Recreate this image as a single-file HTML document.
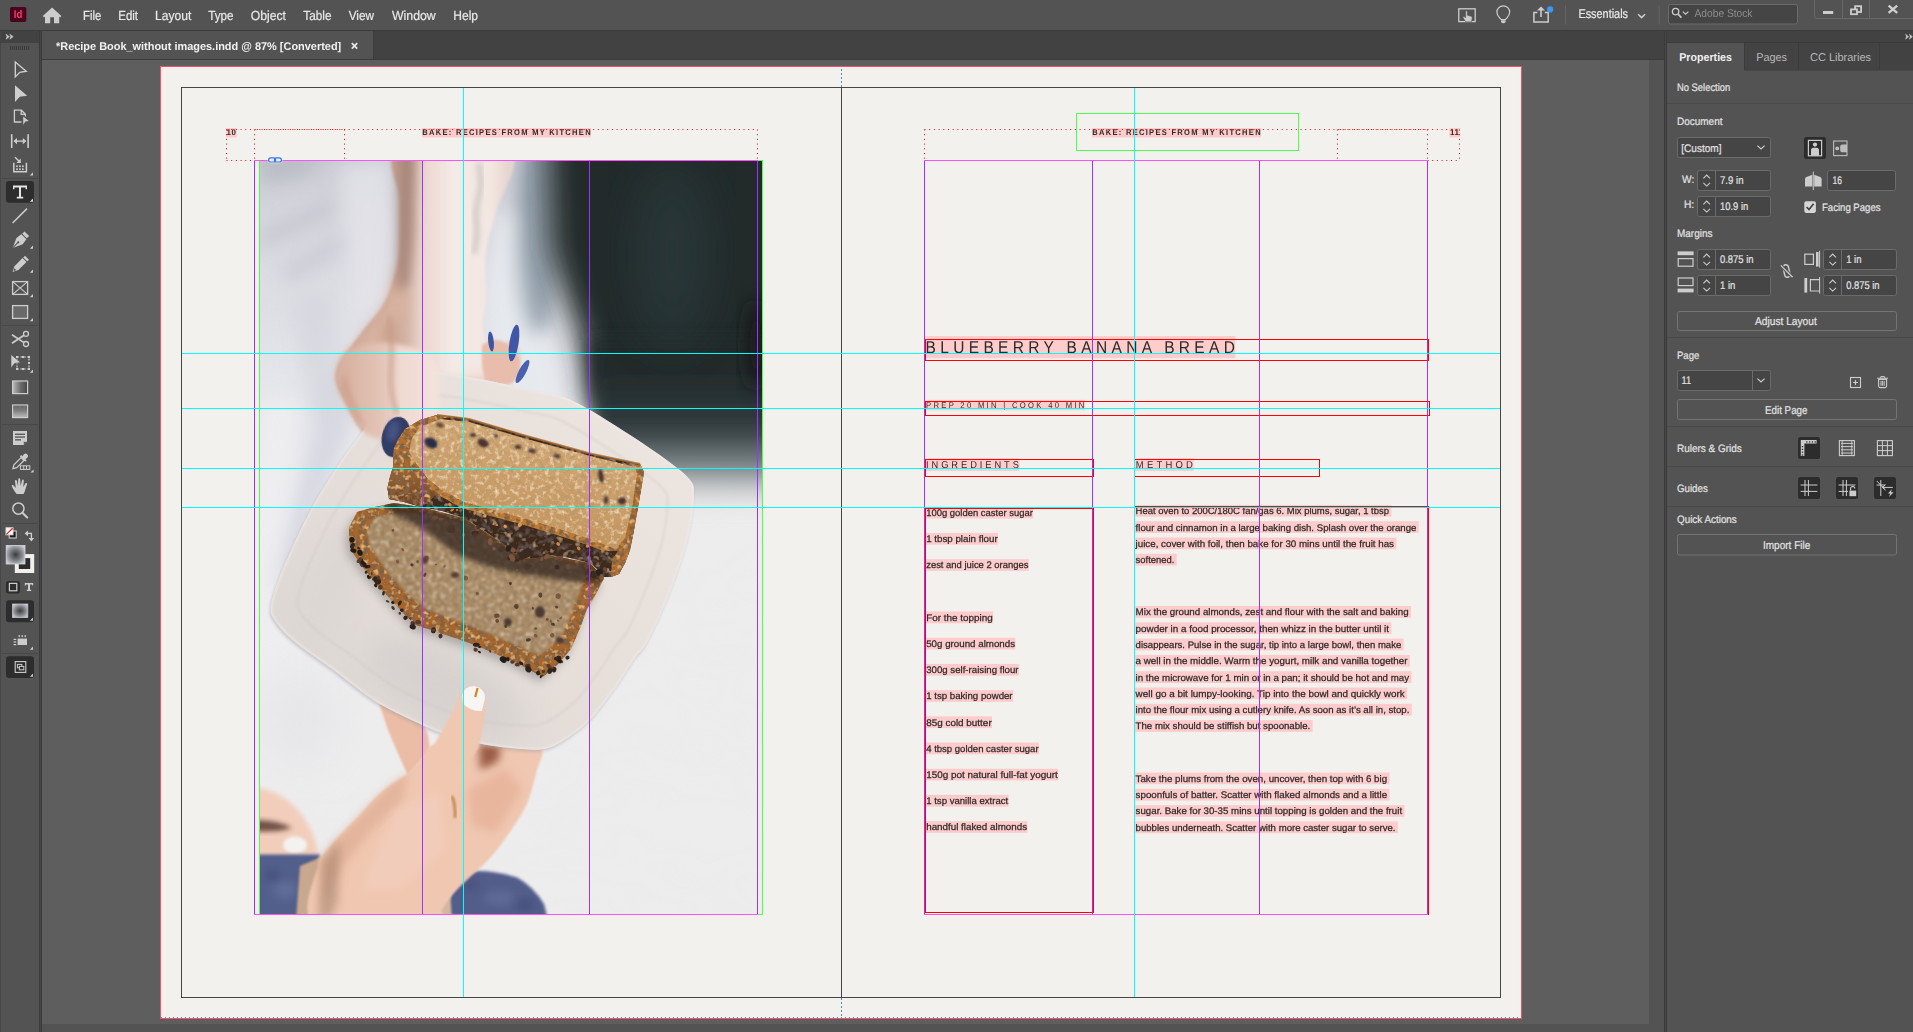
<!DOCTYPE html>
<html lang="en"><head><meta charset="utf-8"><title>Recipe Book_without images.indd @ 87% [Converted]</title>
<style>
html,body{margin:0;padding:0;background:#535353;overflow:hidden}
body{width:1913px;height:1032px;position:relative}
svg{position:absolute;left:0;top:0;display:block}
text{font-family:"Liberation Sans",sans-serif;white-space:pre}
</style></head><body>
<svg width="1913" height="1032" viewBox="0 0 1913 1032" shape-rendering="auto" text-rendering="geometricPrecision">
<rect x="0" y="0" width="1913" height="1032" fill="#535353"/>
<rect x="42" y="60" width="1623" height="972" fill="#5e5e5e"/>
<rect x="1649" y="60" width="16" height="972" fill="#535353"/>
<rect x="42" y="1024" width="1623" height="8" fill="#535353"/>
<rect x="160.5" y="66.5" width="1361" height="952" fill="#f3f1ee" stroke="#fa5068" stroke-width="1"/>
<line x1="161" y1="1017.5" x2="1521" y2="1017.5" stroke="#3d8bff" stroke-width="1" stroke-dasharray="1 3"/>
<rect x="181.5" y="87.5" width="1319" height="910" fill="none" stroke="#454545" stroke-width="1"/>
<line x1="841.5" y1="87.5" x2="841.5" y2="997.5" stroke="#454545" stroke-width="1"/>
<line x1="841.5" y1="69" x2="841.5" y2="87" stroke="#3d8bff" stroke-width="1" stroke-dasharray="2 2"/>
<line x1="841.5" y1="998" x2="841.5" y2="1018" stroke="#3d8bff" stroke-width="1" stroke-dasharray="2 2"/>
<defs>
<clipPath id="pclip"><rect x="259" y="161" width="503.5" height="753.5"/></clipPath>
<filter id="b0_6" x="-30%" y="-30%" width="160%" height="160%"><feGaussianBlur stdDeviation="0.6"/></filter>
<filter id="b1" x="-30%" y="-30%" width="160%" height="160%"><feGaussianBlur stdDeviation="1"/></filter>
<filter id="b1_5" x="-30%" y="-30%" width="160%" height="160%"><feGaussianBlur stdDeviation="1.5"/></filter>
<filter id="b2_5" x="-30%" y="-30%" width="160%" height="160%"><feGaussianBlur stdDeviation="2.5"/></filter>
<filter id="b4" x="-30%" y="-30%" width="160%" height="160%"><feGaussianBlur stdDeviation="4"/></filter>
<filter id="b6" x="-30%" y="-30%" width="160%" height="160%"><feGaussianBlur stdDeviation="6"/></filter>
<filter id="b9" x="-30%" y="-30%" width="160%" height="160%"><feGaussianBlur stdDeviation="9"/></filter>
<filter id="b14" x="-30%" y="-30%" width="160%" height="160%"><feGaussianBlur stdDeviation="14"/></filter>
<filter id="b20" x="-30%" y="-30%" width="160%" height="160%"><feGaussianBlur stdDeviation="20"/></filter>
<filter id="crumb" x="0" y="0" width="100%" height="100%"><feTurbulence type="fractalNoise" baseFrequency="0.2" numOctaves="3" seed="7" result="n"/><feColorMatrix in="n" type="matrix" values="0 0 0 0 0.5  0 0 0 0 0.32  0 0 0 0 0.14  3.2 0 0 0 -1.5" result="d"/><feComposite in="d" in2="SourceGraphic" operator="in" result="dd"/><feColorMatrix in="n" type="matrix" values="0 0 0 0 0.9  0 0 0 0 0.76  0 0 0 0 0.54  0 2.2 0 0 -1.12" result="l"/><feComposite in="l" in2="SourceGraphic" operator="in" result="ll"/><feMerge><feMergeNode in="SourceGraphic"/><feMergeNode in="dd"/><feMergeNode in="ll"/></feMerge></filter>
<filter id="crumb2" x="0" y="0" width="100%" height="100%"><feTurbulence type="fractalNoise" baseFrequency="0.22" numOctaves="3" seed="9" result="n"/><feColorMatrix in="n" type="matrix" values="0 0 0 0 0.3  0 0 0 0 0.2  0 0 0 0 0.11  3.6 0 0 0 -1.55" result="d"/><feComposite in="d" in2="SourceGraphic" operator="in" result="dd"/><feColorMatrix in="n" type="matrix" values="0 0 0 0 0.8  0 0 0 0 0.66  0 0 0 0 0.46  0 2.4 0 0 -1.25" result="l"/><feComposite in="l" in2="SourceGraphic" operator="in" result="ll"/><feMerge><feMergeNode in="SourceGraphic"/><feMergeNode in="dd"/><feMergeNode in="ll"/></feMerge></filter>
<filter id="nibs2" x="0" y="0" width="100%" height="100%"><feTurbulence type="fractalNoise" baseFrequency="0.16" numOctaves="2" seed="5" result="n"/><feColorMatrix in="n" type="matrix" values="0 0 0 0 0.1  0 0 0 0 0.07  0 0 0 0 0.06  4.0 0 0 0 -1.9" result="d"/><feComposite in="d" in2="SourceGraphic" operator="in" result="dd"/><feColorMatrix in="n" type="matrix" values="0 0 0 0 0.45  0 0 0 0 0.3  0 0 0 0 0.2  0 3.4 0 0 -1.95" result="l"/><feComposite in="l" in2="SourceGraphic" operator="in" result="ll"/><feMerge><feMergeNode in="SourceGraphic"/><feMergeNode in="dd"/><feMergeNode in="ll"/></feMerge></filter>
<filter id="nibs" x="0" y="0" width="100%" height="100%"><feTurbulence type="fractalNoise" baseFrequency="0.2" numOctaves="2" seed="3" result="n"/><feColorMatrix in="n" type="matrix" values="0 0 0 0 0.22  0 0 0 0 0.12  0 0 0 0 0.06  5.0 0 0 0 -2.1" result="d"/><feComposite in="d" in2="SourceGraphic" operator="in" result="dd"/><feColorMatrix in="n" type="matrix" values="0 0 0 0 0.74  0 0 0 0 0.46  0 0 0 0 0.19  0 3.6 0 0 -1.95" result="l"/><feComposite in="l" in2="SourceGraphic" operator="in" result="ll"/><feMerge><feMergeNode in="SourceGraphic"/><feMergeNode in="dd"/><feMergeNode in="ll"/></feMerge></filter>
<filter id="soft" x="0" y="0" width="100%" height="100%"><feTurbulence type="fractalNoise" baseFrequency="0.012 0.02" numOctaves="2" seed="11" result="n"/><feColorMatrix in="n" type="matrix" values="0 0 0 0 0.82  0 0 0 0 0.82  0 0 0 0 0.85  0.9 0 0 0 -0.32"/></filter>
<linearGradient id="plg" gradientUnits="userSpaceOnUse" x1="640" y1="430" x2="330" y2="700"><stop offset="0" stop-color="#ece4df"/><stop offset="0.45" stop-color="#e7dfda"/><stop offset="1" stop-color="#ded8d5"/></linearGradient>
<linearGradient id="clg" gradientUnits="userSpaceOnUse" x1="0" y1="161" x2="0" y2="640"><stop offset="0" stop-color="#c9cbd3"/><stop offset="0.12" stop-color="#d6d7de"/><stop offset="0.45" stop-color="#e4e5ea"/><stop offset="0.75" stop-color="#eeeef1"/><stop offset="1" stop-color="#eeeef0"/></linearGradient>
<linearGradient id="arm" gradientUnits="userSpaceOnUse" x1="398" y1="0" x2="508" y2="0"><stop offset="0" stop-color="#c7a396"/><stop offset="0.22" stop-color="#ecd6cd"/><stop offset="0.5" stop-color="#f4eae6"/><stop offset="0.85" stop-color="#f3e6e1"/><stop offset="1" stop-color="#e6d5cf"/></linearGradient>
<linearGradient id="drk" gradientUnits="userSpaceOnUse" x1="0" y1="370" x2="0" y2="512"><stop offset="0" stop-color="#222b2c"/><stop offset="0.42" stop-color="#2e393b" stop-opacity="0.98"/><stop offset="0.7" stop-color="#677376" stop-opacity="0.8"/><stop offset="1" stop-color="#d5d6d9" stop-opacity="0"/></linearGradient>
<linearGradient id="crg" gradientUnits="userSpaceOnUse" x1="520" y1="420" x2="500" y2="540"><stop offset="0" stop-color="#d3aa78"/><stop offset="1" stop-color="#c4935b"/></linearGradient>
<linearGradient id="crl" gradientUnits="userSpaceOnUse" x1="0" y1="420" x2="0" y2="505"><stop offset="0" stop-color="#b97832"/><stop offset="0.55" stop-color="#a8682b"/><stop offset="1" stop-color="#6d4221"/></linearGradient>
<linearGradient id="thg" gradientUnits="userSpaceOnUse" x1="338" y1="0" x2="438" y2="0"><stop offset="0" stop-color="#d6ae9c"/><stop offset="0.45" stop-color="#e4c5b8"/><stop offset="0.62" stop-color="#efd9d0"/><stop offset="1" stop-color="#f3e3dc"/></linearGradient>
</defs>
<g clip-path="url(#pclip)">
<rect x="259" y="161" width="504" height="754" fill="#eeedee"/>
<rect x="259" y="161" width="330" height="520" fill="url(#clg)"/>
<rect x="259" y="161" width="504" height="754" filter="url(#soft)" opacity="0.3"/>
<g filter="url(#b9)">
<path d="M259 232 L330 200 L336 214 L259 250 Z" fill="#bfc1cb" opacity="0.7"/>
<path d="M280 268 L345 232 L352 246 L290 284 Z" fill="#c3c5cf" opacity="0.65"/>
<path d="M259 150 L330 150 L300 178 L259 186 Z" fill="#b6b9c2" opacity="0.8"/>
<path d="M340 165 L392 160 L390 300 L352 330 Z" fill="#e3e3e9" opacity="0.85"/>
<path d="M290 300 L330 290 L345 400 L310 420 Z" fill="#d2d4dc" opacity="0.6"/>
<path d="M330 370 L352 420 L300 560 L272 590 Z" fill="#d3d5de" opacity="0.85"/>
<path d="M259 400 L300 400 L262 600 L259 600 Z" fill="#eeeef1" opacity="0.9"/>
<path d="M498 215 L520 218 L545 330 L575 440 L560 470 L500 400 L486 300 Z" fill="#e6e9ee"/>
<ellipse cx="538" cy="235" rx="22" ry="100" fill="#8393a0" opacity="0.75"/>
</g>
<g filter="url(#b14)">
<path d="M546 130 L550 250 L566 300 L580 340 L586 372 L588 405 L800 405 L800 130 Z" fill="#222b2c"/>
</g>
<g filter="url(#b9)"><path d="M588 340 L800 340 L800 520 L596 520 Z" fill="url(#drk)"/></g>
<ellipse cx="672" cy="255" rx="40" ry="90" fill="#2c3a3c" opacity="0.7" filter="url(#b20)"/>
<ellipse cx="756" cy="345" rx="12" ry="46" fill="#191515" opacity="0.7" filter="url(#b9)"/>
<ellipse cx="300" cy="720" rx="40" ry="50" fill="#e4e4e7" opacity="0.7" filter="url(#b20)"/>
<path d="M399.5 150.0 C417.8 141.7 492.9 139.7 509.0 150.0 C525.1 160.3 499.8 195.0 496.0 212.0 C492.2 229.0 487.7 237.3 486.0 252.0 C484.3 266.7 486.5 288.3 486.0 300.0 C485.5 311.7 483.0 315.3 483.0 322.0 C483.0 328.7 483.2 336.2 486.0 340.0 C488.8 343.8 495.7 345.0 500.0 345.0 C504.3 345.0 508.5 338.8 512.0 340.0 C515.5 341.2 520.0 346.7 521.0 352.0 C522.0 357.3 520.2 366.7 518.0 372.0 C515.8 377.3 516.0 380.7 508.0 384.0 C500.0 387.3 483.0 389.3 470.0 392.0 C457.0 394.7 441.7 395.3 430.0 400.0 C418.3 404.7 409.7 413.3 400.0 420.0 C390.3 426.7 378.8 439.0 372.0 440.0 C365.2 441.0 362.5 430.7 359.0 426.0 C355.5 421.3 354.5 418.7 351.0 412.0 C347.5 405.3 340.4 392.7 338.0 386.0 C335.6 379.3 335.7 376.7 336.5 372.0 C337.3 367.3 338.8 364.7 343.0 358.0 C347.2 351.3 355.3 340.8 362.0 332.0 C368.7 323.2 377.7 314.0 383.0 305.0 C388.3 296.0 391.3 286.8 394.0 278.0 C396.7 269.2 398.1 265.0 399.0 252.0 C399.9 239.0 399.4 217.0 399.5 200.0 C399.6 183.0 381.2 158.3 399.5 150.0 Z" fill="url(#arm)" filter="url(#b1_5)"/>
<g filter="url(#b6)">
<path d="M397 262 L408 300 L402 345 L384 392 L356 416 L340 386 L342 364 L362 334 L384 306 Z" fill="#dcb5a3" opacity="0.8"/>
<path d="M385 320 L395 324 L392 350 L385 346 Z" fill="#bd917c" opacity="0.7"/>
<path d="M399 150 L416 150 L413 240 L408 285 L396 292 L398 255 Z" fill="#9c7b6f" opacity="0.85"/>
<path d="M440 382 L500 374 L505 392 L440 400 Z" fill="#ecc9bb" opacity="0.9"/>
</g>
<path d="M479 163 L481 185 L476 210 L477 235 L474 254" fill="none" stroke="#cfc8c4" stroke-width="6" opacity="0.85" filter="url(#b2_5)"/>
<path d="M482 345 Q494 336 506 343 Q518 348 520 362 Q521 376 512 383 L488 388 Q480 370 482 345 Z" fill="#e9bdac" filter="url(#b1)"/>
<g filter="url(#b0_6)">
<ellipse cx="514" cy="343" rx="4.6" ry="18.5" transform="rotate(9 514 343)" fill="#4156a6"/>
<ellipse cx="491" cy="341.5" rx="2.8" ry="10" transform="rotate(-6 491 341.5)" fill="#4055a2"/>
<ellipse cx="522.5" cy="371.5" rx="3.6" ry="13" transform="rotate(28 522.5 371.5)" fill="#4a60ae"/>
</g>
<path d="M255 787 Q285 792 302 815 Q318 838 318 858 L255 860 Z" fill="#f2cdbb" filter="url(#b2_5)"/>
<path d="M255 820 Q278 820 292 828 Q276 833 255 831 Z" fill="#5b3a30" opacity="0.85" filter="url(#b2_5)"/>
<ellipse cx="295" cy="845" rx="12" ry="8.5" fill="#f3f2f0" filter="url(#b1_5)"/>
<path d="M255 854.5 L320 854.5 L318 920 L255 920 Z" fill="#535e8b" filter="url(#b1_5)"/>
<path d="M436 915 L448 899 L458 883 Q466 872 477 871 Q497 871 517 877.5 Q533 886 544 904 L548 920 Z" fill="#525d8a" filter="url(#b1_5)"/>
<ellipse cx="285" cy="890" rx="12" ry="9" fill="#6b77a2" opacity="0.6" filter="url(#b4)"/><ellipse cx="500" cy="898" rx="16" ry="8" fill="#6874a0" opacity="0.55" filter="url(#b4)"/>
<ellipse cx="272" cy="875" rx="8" ry="6" fill="#3f4975" opacity="0.6" filter="url(#b4)"/><ellipse cx="525" cy="905" rx="10" ry="6" fill="#3f4975" opacity="0.6" filter="url(#b4)"/><ellipse cx="470" cy="885" rx="9" ry="6" fill="#404a76" opacity="0.5" filter="url(#b4)"/>
<path d="M319 858 L300 866 L296 920 L340 920 L326 880 Z" fill="#c8a88f" filter="url(#b1)"/>
<path d="M420 899 L450 890 L452 920 L418 920 Z" fill="#d5b6a0" filter="url(#b1)"/>
<path d="M378 700 L420 716 L428 735 L430 750 L408 776 L396 749 L388 730 Z" fill="#ebbca6" filter="url(#b1)"/>
<path d="M431.0 746.0 C437.0 742.7 447.8 740.7 456.0 740.0 C464.2 739.3 471.0 741.3 480.0 742.0 C489.0 742.7 499.8 742.8 510.0 744.0 C520.2 745.2 536.5 744.7 541.0 749.0 C545.5 753.3 538.7 762.8 537.0 770.0 C535.3 777.2 533.0 785.7 531.0 792.0 C529.0 798.3 528.2 801.8 525.0 808.0 C521.8 814.2 516.8 821.8 512.0 829.0 C507.2 836.2 501.0 844.8 496.0 851.0 C491.0 857.2 486.5 861.5 482.0 866.0 C477.5 870.5 473.8 873.3 469.0 878.0 C464.2 882.7 457.5 888.7 453.0 894.0 C448.5 899.3 444.5 904.8 442.0 910.0 C439.5 915.2 459.0 922.5 438.0 925.0 C417.0 927.5 336.0 935.2 316.0 925.0 C296.0 914.8 317.0 875.5 318.0 864.0 C319.0 852.5 319.5 859.5 322.0 856.0 C324.5 852.5 329.0 847.5 333.0 843.0 C337.0 838.5 341.7 833.5 346.0 829.0 C350.3 824.5 354.5 820.8 359.0 816.0 C363.5 811.2 368.0 805.0 373.0 800.0 C378.0 795.0 383.2 790.5 389.0 786.0 C394.8 781.5 402.8 777.3 408.0 773.0 C413.2 768.7 416.2 764.5 420.0 760.0 C423.8 755.5 425.0 749.3 431.0 746.0 Z" fill="#f0c7b1" filter="url(#b1)"/>
<path d="M408 773 L389 786 L359 816 L333 843 L320 862 L322 905 L340 870 L372 830 L402 800 Z" fill="#dba88f" opacity="0.6" filter="url(#b4)"/>
<g filter="url(#b4)">
<path d="M479 744 L501 745 L498 762 L480 770 Z" fill="#8f4f36" opacity="0.9"/>
<path d="M468 790 L505 768 L522 790 L496 832 L472 826 Z" fill="#e6b097" opacity="0.75"/>
<path d="M395 810 L440 790 L446 850 L400 890 L360 890 Z" fill="#f6d8ca" opacity="0.35"/>
<path d="M322 862 L340 840 L338 900 L330 920 L318 920 Z" fill="#a37f69" opacity="0.55"/>
</g>
<path d="M452 796 Q456 806 455 818" fill="none" stroke="#b17c3c" stroke-width="2.6" opacity="0.85" filter="url(#b1)"/>
<path d="M402.0 383.0 C410.5 376.5 416.0 372.7 429.0 372.0 C442.0 371.3 463.2 376.0 480.0 379.0 C496.8 382.0 514.8 386.5 530.0 390.0 C545.2 393.5 554.3 392.5 571.0 400.0 C587.7 407.5 613.2 424.3 630.0 435.0 C646.8 445.7 662.0 456.5 672.0 464.0 C682.0 471.5 686.3 475.0 690.0 480.0 C693.7 485.0 694.2 485.0 694.0 494.0 C693.8 503.0 692.7 518.5 689.0 534.0 C685.3 549.5 678.8 569.2 672.0 587.0 C665.2 604.8 654.2 629.2 648.0 641.0 C641.8 652.8 640.3 650.3 635.0 658.0 C629.7 665.7 623.5 676.7 616.0 687.0 C608.5 697.3 598.8 711.0 590.0 720.0 C581.2 729.0 570.7 736.2 563.0 741.0 C555.3 745.8 550.8 747.7 544.0 749.0 C537.2 750.3 532.3 749.8 522.0 749.0 C511.7 748.2 495.3 746.7 482.0 744.0 C468.7 741.3 453.0 736.7 442.0 733.0 C431.0 729.3 427.2 727.3 416.0 722.0 C404.8 716.7 388.5 709.5 375.0 701.0 C361.5 692.5 348.3 680.8 335.0 671.0 C321.7 661.2 304.8 650.2 295.0 642.0 C285.2 633.8 280.0 628.0 276.0 622.0 C272.0 616.0 270.0 614.5 271.0 606.0 C272.0 597.5 275.8 586.2 282.0 571.0 C288.2 555.8 299.2 531.8 308.0 515.0 C316.8 498.2 326.0 483.8 335.0 470.0 C344.0 456.2 354.8 441.8 362.0 432.0 C369.2 422.2 371.3 419.2 378.0 411.0 C384.7 402.8 393.5 389.5 402.0 383.0 Z" fill="#9c9b9e" opacity="0.45" transform="translate(-1,2)" filter="url(#b1_5)"/>
<path d="M402.0 383.0 C410.5 376.5 416.0 372.7 429.0 372.0 C442.0 371.3 463.2 376.0 480.0 379.0 C496.8 382.0 514.8 386.5 530.0 390.0 C545.2 393.5 554.3 392.5 571.0 400.0 C587.7 407.5 613.2 424.3 630.0 435.0 C646.8 445.7 662.0 456.5 672.0 464.0 C682.0 471.5 686.3 475.0 690.0 480.0 C693.7 485.0 694.2 485.0 694.0 494.0 C693.8 503.0 692.7 518.5 689.0 534.0 C685.3 549.5 678.8 569.2 672.0 587.0 C665.2 604.8 654.2 629.2 648.0 641.0 C641.8 652.8 640.3 650.3 635.0 658.0 C629.7 665.7 623.5 676.7 616.0 687.0 C608.5 697.3 598.8 711.0 590.0 720.0 C581.2 729.0 570.7 736.2 563.0 741.0 C555.3 745.8 550.8 747.7 544.0 749.0 C537.2 750.3 532.3 749.8 522.0 749.0 C511.7 748.2 495.3 746.7 482.0 744.0 C468.7 741.3 453.0 736.7 442.0 733.0 C431.0 729.3 427.2 727.3 416.0 722.0 C404.8 716.7 388.5 709.5 375.0 701.0 C361.5 692.5 348.3 680.8 335.0 671.0 C321.7 661.2 304.8 650.2 295.0 642.0 C285.2 633.8 280.0 628.0 276.0 622.0 C272.0 616.0 270.0 614.5 271.0 606.0 C272.0 597.5 275.8 586.2 282.0 571.0 C288.2 555.8 299.2 531.8 308.0 515.0 C316.8 498.2 326.0 483.8 335.0 470.0 C344.0 456.2 354.8 441.8 362.0 432.0 C369.2 422.2 371.3 419.2 378.0 411.0 C384.7 402.8 393.5 389.5 402.0 383.0 Z" fill="url(#plg)" filter="url(#b0_6)"/>
<clipPath id="plc"><path d="M402.0 383.0 C410.5 376.5 416.0 372.7 429.0 372.0 C442.0 371.3 463.2 376.0 480.0 379.0 C496.8 382.0 514.8 386.5 530.0 390.0 C545.2 393.5 554.3 392.5 571.0 400.0 C587.7 407.5 613.2 424.3 630.0 435.0 C646.8 445.7 662.0 456.5 672.0 464.0 C682.0 471.5 686.3 475.0 690.0 480.0 C693.7 485.0 694.2 485.0 694.0 494.0 C693.8 503.0 692.7 518.5 689.0 534.0 C685.3 549.5 678.8 569.2 672.0 587.0 C665.2 604.8 654.2 629.2 648.0 641.0 C641.8 652.8 640.3 650.3 635.0 658.0 C629.7 665.7 623.5 676.7 616.0 687.0 C608.5 697.3 598.8 711.0 590.0 720.0 C581.2 729.0 570.7 736.2 563.0 741.0 C555.3 745.8 550.8 747.7 544.0 749.0 C537.2 750.3 532.3 749.8 522.0 749.0 C511.7 748.2 495.3 746.7 482.0 744.0 C468.7 741.3 453.0 736.7 442.0 733.0 C431.0 729.3 427.2 727.3 416.0 722.0 C404.8 716.7 388.5 709.5 375.0 701.0 C361.5 692.5 348.3 680.8 335.0 671.0 C321.7 661.2 304.8 650.2 295.0 642.0 C285.2 633.8 280.0 628.0 276.0 622.0 C272.0 616.0 270.0 614.5 271.0 606.0 C272.0 597.5 275.8 586.2 282.0 571.0 C288.2 555.8 299.2 531.8 308.0 515.0 C316.8 498.2 326.0 483.8 335.0 470.0 C344.0 456.2 354.8 441.8 362.0 432.0 C369.2 422.2 371.3 419.2 378.0 411.0 C384.7 402.8 393.5 389.5 402.0 383.0 Z"/></clipPath>
<g clip-path="url(#plc)">
<ellipse cx="445" cy="688" rx="85" ry="36" transform="rotate(28 445 688)" fill="#d5d0ce" opacity="0.85" filter="url(#b14)"/>
<ellipse cx="330" cy="585" rx="28" ry="70" transform="rotate(25 330 585)" fill="#dcd6d3" opacity="0.7" filter="url(#b9)"/>
<path d="M402.0 383.0 C410.5 376.5 416.0 372.7 429.0 372.0 C442.0 371.3 463.2 376.0 480.0 379.0 C496.8 382.0 514.8 386.5 530.0 390.0 C545.2 393.5 554.3 392.5 571.0 400.0 C587.7 407.5 613.2 424.3 630.0 435.0 C646.8 445.7 662.0 456.5 672.0 464.0 C682.0 471.5 686.3 475.0 690.0 480.0 C693.7 485.0 694.2 485.0 694.0 494.0 C693.8 503.0 692.7 518.5 689.0 534.0 C685.3 549.5 678.8 569.2 672.0 587.0 C665.2 604.8 654.2 629.2 648.0 641.0 C641.8 652.8 640.3 650.3 635.0 658.0 C629.7 665.7 623.5 676.7 616.0 687.0 C608.5 697.3 598.8 711.0 590.0 720.0 C581.2 729.0 570.7 736.2 563.0 741.0 C555.3 745.8 550.8 747.7 544.0 749.0 C537.2 750.3 532.3 749.8 522.0 749.0 C511.7 748.2 495.3 746.7 482.0 744.0 C468.7 741.3 453.0 736.7 442.0 733.0 C431.0 729.3 427.2 727.3 416.0 722.0 C404.8 716.7 388.5 709.5 375.0 701.0 C361.5 692.5 348.3 680.8 335.0 671.0 C321.7 661.2 304.8 650.2 295.0 642.0 C285.2 633.8 280.0 628.0 276.0 622.0 C272.0 616.0 270.0 614.5 271.0 606.0 C272.0 597.5 275.8 586.2 282.0 571.0 C288.2 555.8 299.2 531.8 308.0 515.0 C316.8 498.2 326.0 483.8 335.0 470.0 C344.0 456.2 354.8 441.8 362.0 432.0 C369.2 422.2 371.3 419.2 378.0 411.0 C384.7 402.8 393.5 389.5 402.0 383.0 Z" fill="none" stroke="#f0ecea" stroke-width="3.5" opacity="0.6" filter="url(#b1)"/>
<path d="M402.0 383.0 C410.5 376.5 416.0 372.7 429.0 372.0 C442.0 371.3 463.2 376.0 480.0 379.0 C496.8 382.0 514.8 386.5 530.0 390.0 C545.2 393.5 554.3 392.5 571.0 400.0 C587.7 407.5 613.2 424.3 630.0 435.0 C646.8 445.7 662.0 456.5 672.0 464.0 C682.0 471.5 686.3 475.0 690.0 480.0 C693.7 485.0 694.2 485.0 694.0 494.0 C693.8 503.0 692.7 518.5 689.0 534.0 C685.3 549.5 678.8 569.2 672.0 587.0 C665.2 604.8 654.2 629.2 648.0 641.0 C641.8 652.8 640.3 650.3 635.0 658.0 C629.7 665.7 623.5 676.7 616.0 687.0 C608.5 697.3 598.8 711.0 590.0 720.0 C581.2 729.0 570.7 736.2 563.0 741.0 C555.3 745.8 550.8 747.7 544.0 749.0 C537.2 750.3 532.3 749.8 522.0 749.0 C511.7 748.2 495.3 746.7 482.0 744.0 C468.7 741.3 453.0 736.7 442.0 733.0 C431.0 729.3 427.2 727.3 416.0 722.0 C404.8 716.7 388.5 709.5 375.0 701.0 C361.5 692.5 348.3 680.8 335.0 671.0 C321.7 661.2 304.8 650.2 295.0 642.0 C285.2 633.8 280.0 628.0 276.0 622.0 C272.0 616.0 270.0 614.5 271.0 606.0 C272.0 597.5 275.8 586.2 282.0 571.0 C288.2 555.8 299.2 531.8 308.0 515.0 C316.8 498.2 326.0 483.8 335.0 470.0 C344.0 456.2 354.8 441.8 362.0 432.0 C369.2 422.2 371.3 419.2 378.0 411.0 C384.7 402.8 393.5 389.5 402.0 383.0 Z" fill="none" stroke="#cdc6c2" stroke-width="1.6" opacity="0.5" transform="translate(482 560) scale(0.875) translate(-482 -560)" filter="url(#b1)"/>
<path d="M357.0 512.0 L375.0 507.0 L394.0 503.0 L421.0 507.0 L464.0 518.0 L496.0 539.0 L523.0 558.0 L549.0 555.0 L590.0 563.0 L604.0 578.0 L596.0 594.0 L587.0 609.0 L580.0 628.0 L571.0 649.0 L558.0 664.0 L544.0 676.0 L541.0 676.0 L528.0 669.0 L515.0 662.0 L496.0 654.0 L480.0 647.0 L464.0 641.0 L440.0 633.0 L416.0 625.0 L404.0 614.0 L394.0 603.0 L384.0 592.0 L375.0 582.0 L362.0 566.0 L351.0 550.0 L349.0 539.0 L349.0 528.0 Z" fill="#7d7a78" opacity="0.5" transform="translate(-3,5)" filter="url(#b4)"/>
</g>
<path d="M336.5 372.0 C337.8 366.3 338.8 356.8 346.0 352.0 C353.2 347.2 367.7 343.3 380.0 343.0 C392.3 342.7 410.5 346.3 420.0 350.0 C429.5 353.7 433.8 358.3 437.0 365.0 C440.2 371.7 439.0 381.8 439.0 390.0 C439.0 398.2 440.0 408.8 437.0 414.0 C434.0 419.2 425.2 416.7 421.0 421.0 C416.8 425.3 414.8 434.2 412.0 440.0 C409.2 445.8 407.3 453.0 404.0 456.0 C400.7 459.0 395.8 460.7 392.0 458.0 C388.2 455.3 384.7 443.7 381.0 440.0 C377.3 436.3 373.7 438.2 370.0 436.0 C366.3 433.8 362.2 431.0 359.0 427.0 C355.8 423.0 354.5 418.8 351.0 412.0 C347.5 405.2 340.4 392.7 338.0 386.0 C335.6 379.3 335.2 377.7 336.5 372.0 Z" fill="url(#thg)" filter="url(#b2_5)"/>
<path d="M345 372 Q352 400 366 428 Q352 418 340 388 Z" fill="#cda08b" opacity="0.75" filter="url(#b2_5)"/>
<path d="M389 316 Q393 345 391 368 Q389 392 397 414" fill="none" stroke="#c59c89" stroke-width="4" opacity="0.8" filter="url(#b2_5)"/>
<ellipse cx="396" cy="437" rx="14" ry="20.5" transform="rotate(14 396 437)" fill="#313c66" filter="url(#b0_6)"/>
<ellipse cx="393" cy="431" rx="6" ry="11" transform="rotate(14 393 431)" fill="#4b588a" opacity="0.8" filter="url(#b2_5)"/>
<path d="M461 694 Q463 686 474 686 Q485 688 485 697 L485 712 L482.5 730 L478.5 748 L470 760 L440 762 L431.7 749 L442.4 730 L453 711.6 Z" fill="#f0c7b1" filter="url(#b1)"/>
<path d="M462 696 Q464 686 474 686 Q485 688 485 698 L482 711 Q472 712 463 704 Z" fill="#f7f6f4" filter="url(#b0_6)"/>
<path d="M477.6 688 L475.2 697" stroke="#dc851f" stroke-width="2.2" filter="url(#b0_6)"/>
<path d="M357.0 512.0 L375.0 507.0 L394.0 503.0 L421.0 507.0 L464.0 518.0 L496.0 539.0 L523.0 558.0 L549.0 555.0 L590.0 563.0 L604.0 578.0 L596.0 594.0 L587.0 609.0 L580.0 628.0 L571.0 649.0 L558.0 664.0 L544.0 676.0 L541.0 676.0 L528.0 669.0 L515.0 662.0 L496.0 654.0 L480.0 647.0 L464.0 641.0 L440.0 633.0 L416.0 625.0 L404.0 614.0 L394.0 603.0 L384.0 592.0 L375.0 582.0 L362.0 566.0 L351.0 550.0 L349.0 539.0 L349.0 528.0 Z" fill="#a86629" filter="url(#nibs)"/>
<g filter="url(#b1)"><path d="M366.0 516.0 L394.0 510.0 L421.0 513.0 L464.0 524.0 L496.0 545.0 L523.0 564.0 L549.0 561.0 L586.0 568.0 L590.0 580.0 L580.0 608.0 L566.0 643.0 L550.0 660.0 L541.0 666.0 L515.0 654.0 L464.0 632.0 L422.0 616.0 L402.0 600.0 L382.0 578.0 L362.0 550.0 L358.0 532.0 Z" fill="#aa8b66" filter="url(#crumb2)" transform="translate(478 580) scale(0.94 0.92) translate(-476 -584)"/></g>
<clipPath id="botc"><path d="M357.0 512.0 L375.0 507.0 L394.0 503.0 L421.0 507.0 L464.0 518.0 L496.0 539.0 L523.0 558.0 L549.0 555.0 L590.0 563.0 L604.0 578.0 L596.0 594.0 L587.0 609.0 L580.0 628.0 L571.0 649.0 L558.0 664.0 L544.0 676.0 L541.0 676.0 L528.0 669.0 L515.0 662.0 L496.0 654.0 L480.0 647.0 L464.0 641.0 L440.0 633.0 L416.0 625.0 L404.0 614.0 L394.0 603.0 L384.0 592.0 L375.0 582.0 L362.0 566.0 L351.0 550.0 L349.0 539.0 L349.0 528.0 Z"/></clipPath>
<g clip-path="url(#botc)"><path d="M380 500 L421 507 L464 518 L496 539 L523 558 L549 555 L590 563 L604 577 L600 584 L560 580 L520 574 L485 566 L455 553 L425 530 L395 515 Z" fill="#2e211a" opacity="0.72" filter="url(#b2_5)"/></g>
<path d="M437.0 415.0 L452.0 416.5 L469.0 419.0 L497.0 427.0 L523.0 435.0 L556.0 444.0 L590.0 453.5 L616.0 459.0 L640.0 464.0 L644.0 472.0 L641.0 490.0 L638.0 507.0 L634.0 530.0 L630.0 550.0 L625.0 563.0 L619.0 574.0 L611.0 577.0 L603.0 577.0 L597.0 569.0 L590.0 563.0 L570.0 558.0 L549.0 555.0 L536.0 558.0 L523.0 558.0 L509.0 548.0 L496.0 539.0 L480.0 528.0 L464.0 518.0 L442.0 511.0 L421.0 507.0 L404.0 502.0 L389.0 499.0 L387.5 488.0 L390.0 477.0 L393.0 467.0 L393.0 457.0 L394.0 448.0 L399.0 438.0 L405.0 429.0 L420.0 420.0 Z" fill="#3d2a1f" filter="url(#nibs2)"/>
<path d="M437 415 L452 416.5 L440 419 L426 424 L424 450 L427 478 L440 492 L421 507 L404 502 L389 499 L387.5 488 L390 477 L393 467 L393 457 L394 448 L399 438 L405 429 L420 420 Z" fill="url(#crl)" filter="url(#nibs)"/>
<path d="M640 464 L644 472 L641 490 L638 507 L634 530 L630 550 L625 563 L619 574 L611 577 L612 560 L620 548 L628 520 L634 480 L634 466 Z" fill="#b0702d" filter="url(#nibs)"/>
<path d="M427 479 L444 493 L464 504 L493 512 L523 520 L556 530 L590 541 L616 551 L625 546" fill="none" stroke="#bf7a30" stroke-width="9" stroke-linejoin="round" filter="url(#nibs)"/>
<g filter="url(#b0_6)"><path d="M440.0 419.0 L469.0 422.0 L523.0 438.0 L590.0 456.0 L635.0 467.0 L637.0 474.0 L632.0 508.0 L625.0 538.0 L616.0 549.0 L590.0 539.0 L556.0 528.0 L523.0 518.0 L493.0 510.0 L464.0 502.0 L444.0 491.0 L429.0 480.0 L418.0 466.0 L409.0 452.0 L412.0 438.0 L420.0 427.0 Z" fill="url(#crg)" filter="url(#crumb)"/></g>
<path d="M437 415 L469 419 L523 435 L590 453.5 L640 464" fill="none" stroke="#a9692b" stroke-width="2" opacity="0.8" filter="url(#b0_6)"/>
<g filter="url(#b0_6)">
<ellipse cx="599.2" cy="572.4" rx="3.6" ry="3.5" fill="#2c201b" transform="rotate(7 599.2 572.4)"/>
<ellipse cx="494.0" cy="548.7" rx="1.9" ry="1.8" fill="#7a563e" transform="rotate(97 494.0 548.7)"/>
<ellipse cx="568.2" cy="566.5" rx="2.6" ry="2.5" fill="#6b4a38" transform="rotate(99 568.2 566.5)"/>
<ellipse cx="430.5" cy="516.2" rx="1.9" ry="1.9" fill="#5c3f30" transform="rotate(1 430.5 516.2)"/>
<ellipse cx="478.1" cy="527.1" rx="2.0" ry="2.0" fill="#4a342a" transform="rotate(138 478.1 527.1)"/>
<ellipse cx="601.6" cy="577.4" rx="3.3" ry="2.2" fill="#7a563e" transform="rotate(92 601.6 577.4)"/>
<ellipse cx="475.0" cy="533.1" rx="3.6" ry="2.0" fill="#3a2a22" transform="rotate(173 475.0 533.1)"/>
<ellipse cx="452.1" cy="527.8" rx="2.8" ry="1.7" fill="#4a342a" transform="rotate(120 452.1 527.8)"/>
<ellipse cx="451.2" cy="529.4" rx="3.9" ry="3.6" fill="#4a342a" transform="rotate(4 451.2 529.4)"/>
<ellipse cx="536.0" cy="561.1" rx="1.6" ry="1.4" fill="#5c3f30" transform="rotate(159 536.0 561.1)"/>
<ellipse cx="490.2" cy="541.6" rx="3.6" ry="2.5" fill="#7a563e" transform="rotate(90 490.2 541.6)"/>
<ellipse cx="524.1" cy="553.0" rx="3.4" ry="3.2" fill="#4a342a" transform="rotate(9 524.1 553.0)"/>
<ellipse cx="441.1" cy="519.1" rx="2.5" ry="1.7" fill="#6b4a38" transform="rotate(179 441.1 519.1)"/>
<ellipse cx="513.8" cy="550.9" rx="3.5" ry="2.2" fill="#2c201b" transform="rotate(176 513.8 550.9)"/>
<ellipse cx="526.6" cy="553.7" rx="4.0" ry="3.8" fill="#3a2a22" transform="rotate(8 526.6 553.7)"/>
<ellipse cx="557.3" cy="557.9" rx="3.2" ry="1.8" fill="#6b4a38" transform="rotate(163 557.3 557.9)"/>
<ellipse cx="521.6" cy="555.9" rx="4.0" ry="3.9" fill="#3a2a22" transform="rotate(161 521.6 555.9)"/>
<ellipse cx="541.7" cy="559.1" rx="2.0" ry="1.3" fill="#7a563e" transform="rotate(116 541.7 559.1)"/>
<ellipse cx="591.8" cy="572.2" rx="2.7" ry="2.3" fill="#7a563e" transform="rotate(81 591.8 572.2)"/>
<ellipse cx="509.0" cy="558.3" rx="1.9" ry="1.8" fill="#3a2a22" transform="rotate(160 509.0 558.3)"/>
<ellipse cx="516.9" cy="559.0" rx="2.8" ry="2.7" fill="#3a2a22" transform="rotate(92 516.9 559.0)"/>
<ellipse cx="501.4" cy="549.2" rx="3.4" ry="2.7" fill="#4a342a" transform="rotate(171 501.4 549.2)"/>
<ellipse cx="527.3" cy="566.7" rx="3.3" ry="2.8" fill="#4a342a" transform="rotate(148 527.3 566.7)"/>
<ellipse cx="546.7" cy="556.5" rx="3.2" ry="2.2" fill="#7a563e" transform="rotate(128 546.7 556.5)"/>
<ellipse cx="511.7" cy="557.1" rx="3.4" ry="2.4" fill="#7a563e" transform="rotate(44 511.7 557.1)"/>
<ellipse cx="605.0" cy="569.3" rx="2.4" ry="1.9" fill="#6b4a38" transform="rotate(42 605.0 569.3)"/>
<ellipse cx="508.3" cy="548.5" rx="3.3" ry="2.8" fill="#2c201b" transform="rotate(106 508.3 548.5)"/>
<ellipse cx="557.1" cy="567.1" rx="2.3" ry="2.1" fill="#3a2a22" transform="rotate(163 557.1 567.1)"/>
<ellipse cx="435.2" cy="517.5" rx="3.1" ry="2.0" fill="#6b4a38" transform="rotate(175 435.2 517.5)"/>
<ellipse cx="586.8" cy="566.7" rx="2.1" ry="2.0" fill="#5c3f30" transform="rotate(28 586.8 566.7)"/>
<ellipse cx="474.9" cy="534.4" rx="2.6" ry="1.9" fill="#4a342a" transform="rotate(156 474.9 534.4)"/>
<ellipse cx="463.6" cy="534.9" rx="1.6" ry="1.6" fill="#7a563e" transform="rotate(104 463.6 534.9)"/>
<ellipse cx="610.2" cy="569.4" rx="1.7" ry="1.2" fill="#3a2a22" transform="rotate(75 610.2 569.4)"/>
<ellipse cx="517.5" cy="550.7" rx="2.4" ry="1.8" fill="#6b4a38" transform="rotate(144 517.5 550.7)"/>
<ellipse cx="513.2" cy="550.2" rx="2.5" ry="2.5" fill="#7a563e" transform="rotate(34 513.2 550.2)"/>
<ellipse cx="517.3" cy="556.8" rx="2.5" ry="2.0" fill="#4a342a" transform="rotate(157 517.3 556.8)"/>
<ellipse cx="512.8" cy="559.0" rx="2.5" ry="2.5" fill="#7a563e" transform="rotate(126 512.8 559.0)"/>
<ellipse cx="593.6" cy="574.2" rx="3.8" ry="3.1" fill="#3a2a22" transform="rotate(77 593.6 574.2)"/>
<ellipse cx="529.7" cy="566.2" rx="2.3" ry="1.4" fill="#4a342a" transform="rotate(6 529.7 566.2)"/>
<ellipse cx="561.3" cy="557.2" rx="1.7" ry="1.6" fill="#6b4a38" transform="rotate(3 561.3 557.2)"/>
<ellipse cx="558.2" cy="544.0" rx="2.1" ry="1.6" fill="#d08c40" transform="rotate(39 558.2 544.0)"/>
<ellipse cx="505.2" cy="526.4" rx="1.8" ry="1.7" fill="#dc9c50" transform="rotate(30 505.2 526.4)"/>
<ellipse cx="429.0" cy="500.5" rx="1.6" ry="1.4" fill="#c98236" transform="rotate(6 429.0 500.5)"/>
<ellipse cx="493.4" cy="523.9" rx="1.4" ry="0.9" fill="#d08c40" transform="rotate(116 493.4 523.9)"/>
<ellipse cx="457.1" cy="510.0" rx="1.2" ry="1.0" fill="#c98236" transform="rotate(176 457.1 510.0)"/>
<ellipse cx="578.7" cy="548.4" rx="2.2" ry="1.6" fill="#c98236" transform="rotate(50 578.7 548.4)"/>
<ellipse cx="519.8" cy="524.9" rx="2.2" ry="2.0" fill="#dc9c50" transform="rotate(149 519.8 524.9)"/>
<ellipse cx="484.9" cy="515.7" rx="1.8" ry="1.7" fill="#dc9c50" transform="rotate(84 484.9 515.7)"/>
<ellipse cx="496.9" cy="525.1" rx="1.3" ry="0.9" fill="#d08c40" transform="rotate(21 496.9 525.1)"/>
<ellipse cx="587.5" cy="546.1" rx="1.7" ry="1.7" fill="#d08c40" transform="rotate(179 587.5 546.1)"/>
<ellipse cx="449.8" cy="504.6" rx="2.0" ry="1.7" fill="#d08c40" transform="rotate(34 449.8 504.6)"/>
<ellipse cx="602.9" cy="549.1" rx="1.9" ry="1.8" fill="#c98236" transform="rotate(17 602.9 549.1)"/>
<ellipse cx="452.2" cy="510.0" rx="2.1" ry="1.2" fill="#c98236" transform="rotate(147 452.2 510.0)"/>
<ellipse cx="474.9" cy="513.0" rx="1.7" ry="1.5" fill="#c98236" transform="rotate(125 474.9 513.0)"/>
<ellipse cx="527.9" cy="666.0" rx="2.8" ry="2.2" fill="#4a3226" transform="rotate(173 527.9 666.0)"/>
<ellipse cx="490.1" cy="651.3" rx="1.4" ry="1.0" fill="#4a3226" transform="rotate(72 490.1 651.3)"/>
<ellipse cx="374.2" cy="579.7" rx="2.3" ry="1.4" fill="#5a3a26" transform="rotate(4 374.2 579.7)"/>
<ellipse cx="360.0" cy="552.7" rx="3.1" ry="2.5" fill="#241a17" transform="rotate(61 360.0 552.7)"/>
<ellipse cx="433.4" cy="630.3" rx="3.0" ry="2.4" fill="#33251f" transform="rotate(98 433.4 630.3)"/>
<ellipse cx="367.7" cy="566.7" rx="3.0" ry="1.7" fill="#33251f" transform="rotate(170 367.7 566.7)"/>
<ellipse cx="369.6" cy="577.6" rx="2.0" ry="1.4" fill="#4a3226" transform="rotate(157 369.6 577.6)"/>
<ellipse cx="558.5" cy="658.6" rx="3.0" ry="2.8" fill="#2d211e" transform="rotate(110 558.5 658.6)"/>
<ellipse cx="412.8" cy="623.2" rx="2.5" ry="1.8" fill="#4a3226" transform="rotate(24 412.8 623.2)"/>
<ellipse cx="362.7" cy="563.9" rx="3.2" ry="2.7" fill="#5a3a26" transform="rotate(89 362.7 563.9)"/>
<ellipse cx="412.7" cy="626.8" rx="3.2" ry="2.5" fill="#2d211e" transform="rotate(25 412.7 626.8)"/>
<ellipse cx="518.2" cy="664.5" rx="2.1" ry="1.3" fill="#5a3a26" transform="rotate(65 518.2 664.5)"/>
<ellipse cx="543.4" cy="671.4" rx="1.8" ry="1.7" fill="#5a3a26" transform="rotate(88 543.4 671.4)"/>
<ellipse cx="410.3" cy="618.5" rx="1.3" ry="1.0" fill="#5a3a26" transform="rotate(39 410.3 618.5)"/>
<ellipse cx="517.2" cy="664.1" rx="1.8" ry="1.0" fill="#4a3226" transform="rotate(6 517.2 664.1)"/>
<ellipse cx="528.4" cy="669.3" rx="3.3" ry="2.9" fill="#2d211e" transform="rotate(47 528.4 669.3)"/>
<ellipse cx="393.1" cy="608.0" rx="2.3" ry="1.4" fill="#4a3226" transform="rotate(53 393.1 608.0)"/>
<ellipse cx="542.0" cy="675.7" rx="1.9" ry="1.1" fill="#5a3a26" transform="rotate(174 542.0 675.7)"/>
<ellipse cx="353.3" cy="550.5" rx="3.1" ry="2.2" fill="#241a17" transform="rotate(24 353.3 550.5)"/>
<ellipse cx="378.0" cy="581.7" rx="3.3" ry="2.8" fill="#33251f" transform="rotate(164 378.0 581.7)"/>
<ellipse cx="418.3" cy="622.1" rx="3.1" ry="2.1" fill="#5a3a26" transform="rotate(13 418.3 622.1)"/>
<ellipse cx="375.9" cy="585.3" rx="2.1" ry="1.4" fill="#241a17" transform="rotate(80 375.9 585.3)"/>
<ellipse cx="361.5" cy="562.4" rx="2.6" ry="2.1" fill="#4a3226" transform="rotate(112 361.5 562.4)"/>
<ellipse cx="440.5" cy="636.0" rx="2.4" ry="2.1" fill="#4a3226" transform="rotate(78 440.5 636.0)"/>
<ellipse cx="562.0" cy="661.6" rx="1.6" ry="0.9" fill="#5a3a26" transform="rotate(67 562.0 661.6)"/>
<ellipse cx="405.5" cy="617.7" rx="2.3" ry="2.1" fill="#33251f" transform="rotate(147 405.5 617.7)"/>
<ellipse cx="399.8" cy="613.3" rx="1.4" ry="1.3" fill="#4a3226" transform="rotate(95 399.8 613.3)"/>
<ellipse cx="362.0" cy="561.4" rx="2.9" ry="1.6" fill="#241a17" transform="rotate(73 362.0 561.4)"/>
<ellipse cx="555.7" cy="658.9" rx="1.6" ry="1.4" fill="#33251f" transform="rotate(179 555.7 658.9)"/>
<ellipse cx="358.6" cy="548.1" rx="1.6" ry="1.1" fill="#33251f" transform="rotate(35 358.6 548.1)"/>
<ellipse cx="521.2" cy="663.2" rx="2.4" ry="1.4" fill="#241a17" transform="rotate(31 521.2 663.2)"/>
<ellipse cx="366.9" cy="566.7" rx="1.8" ry="1.0" fill="#241a17" transform="rotate(135 366.9 566.7)"/>
<ellipse cx="392.7" cy="602.5" rx="1.6" ry="1.5" fill="#241a17" transform="rotate(24 392.7 602.5)"/>
<ellipse cx="475.6" cy="649.7" rx="2.2" ry="2.0" fill="#5a3a26" transform="rotate(30 475.6 649.7)"/>
<ellipse cx="433.3" cy="630.1" rx="2.2" ry="1.3" fill="#5a3a26" transform="rotate(171 433.3 630.1)"/>
<ellipse cx="511.6" cy="661.7" rx="1.3" ry="1.2" fill="#4a3226" transform="rotate(107 511.6 661.7)"/>
<ellipse cx="378.0" cy="578.1" rx="2.5" ry="2.2" fill="#5a3a26" transform="rotate(90 378.0 578.1)"/>
<ellipse cx="368.4" cy="576.7" rx="1.9" ry="1.4" fill="#241a17" transform="rotate(61 368.4 576.7)"/>
<ellipse cx="549.8" cy="670.8" rx="3.1" ry="2.5" fill="#33251f" transform="rotate(102 549.8 670.8)"/>
<ellipse cx="371.7" cy="573.6" rx="1.4" ry="1.0" fill="#4a3226" transform="rotate(72 371.7 573.6)"/>
<ellipse cx="380.3" cy="587.4" rx="2.3" ry="2.2" fill="#5a3a26" transform="rotate(159 380.3 587.4)"/>
<ellipse cx="364.7" cy="564.9" rx="2.4" ry="2.0" fill="#241a17" transform="rotate(99 364.7 564.9)"/>
<ellipse cx="512.6" cy="662.1" rx="2.1" ry="1.7" fill="#5a3a26" transform="rotate(176 512.6 662.1)"/>
<ellipse cx="554.2" cy="669.7" rx="2.8" ry="2.2" fill="#33251f" transform="rotate(106 554.2 669.7)"/>
<ellipse cx="479.4" cy="652.0" rx="1.7" ry="1.0" fill="#2d211e" transform="rotate(22 479.4 652.0)"/>
<ellipse cx="504.0" cy="660.1" rx="2.8" ry="2.8" fill="#2d211e" transform="rotate(3 504.0 660.1)"/>
<ellipse cx="521.0" cy="663.3" rx="1.5" ry="1.4" fill="#2d211e" transform="rotate(176 521.0 663.3)"/>
<ellipse cx="538.1" cy="673.0" rx="2.3" ry="2.2" fill="#33251f" transform="rotate(61 538.1 673.0)"/>
<ellipse cx="551.1" cy="667.5" rx="1.3" ry="0.9" fill="#5a3a26" transform="rotate(167 551.1 667.5)"/>
<ellipse cx="375.1" cy="578.3" rx="2.1" ry="2.0" fill="#33251f" transform="rotate(141 375.1 578.3)"/>
<ellipse cx="401.8" cy="610.2" rx="1.9" ry="1.7" fill="#2d211e" transform="rotate(19 401.8 610.2)"/>
<ellipse cx="375.6" cy="585.2" rx="1.7" ry="1.4" fill="#33251f" transform="rotate(160 375.6 585.2)"/>
<ellipse cx="507.8" cy="659.1" rx="2.2" ry="1.8" fill="#241a17" transform="rotate(62 507.8 659.1)"/>
<ellipse cx="387.6" cy="601.4" rx="2.0" ry="1.1" fill="#5a3a26" transform="rotate(29 387.6 601.4)"/>
<ellipse cx="479.7" cy="646.9" rx="1.7" ry="1.0" fill="#241a17" transform="rotate(176 479.7 646.9)"/>
<ellipse cx="352.5" cy="545.8" rx="3.1" ry="2.1" fill="#33251f" transform="rotate(119 352.5 545.8)"/>
<ellipse cx="376.8" cy="580.9" rx="3.0" ry="1.6" fill="#33251f" transform="rotate(172 376.8 580.9)"/>
<ellipse cx="352.0" cy="539.9" rx="2.9" ry="2.6" fill="#241a17" transform="rotate(82 352.0 539.9)"/>
<ellipse cx="559.7" cy="661.2" rx="2.5" ry="2.0" fill="#241a17" transform="rotate(26 559.7 661.2)"/>
<ellipse cx="548.6" cy="665.8" rx="2.1" ry="2.0" fill="#5a3a26" transform="rotate(21 548.6 665.8)"/>
<ellipse cx="476.3" cy="644.8" rx="3.4" ry="2.0" fill="#2d211e" transform="rotate(0 476.3 644.8)"/>
<ellipse cx="399.7" cy="603.1" rx="2.9" ry="1.6" fill="#2d211e" transform="rotate(122 399.7 603.1)"/>
<ellipse cx="567.5" cy="657.7" rx="2.1" ry="2.0" fill="#2d211e" transform="rotate(164 567.5 657.7)"/>
<ellipse cx="556.4" cy="658.6" rx="2.2" ry="1.7" fill="#33251f" transform="rotate(12 556.4 658.6)"/>
<ellipse cx="366.1" cy="572.3" rx="1.6" ry="1.3" fill="#33251f" transform="rotate(110 366.1 572.3)"/>
<ellipse cx="516.4" cy="665.0" rx="1.8" ry="1.3" fill="#5a3a26" transform="rotate(21 516.4 665.0)"/>
<ellipse cx="540.8" cy="676.9" rx="1.3" ry="1.0" fill="#241a17" transform="rotate(98 540.8 676.9)"/>
<ellipse cx="359.4" cy="560.2" rx="3.3" ry="1.9" fill="#5a3a26" transform="rotate(132 359.4 560.2)"/>
<ellipse cx="383.5" cy="593.2" rx="2.3" ry="1.3" fill="#33251f" transform="rotate(100 383.5 593.2)"/>
<ellipse cx="502.9" cy="659.0" rx="3.2" ry="2.7" fill="#241a17" transform="rotate(9 502.9 659.0)"/>
<ellipse cx="558.1" cy="596.1" rx="2.8" ry="2.7" fill="#7a5a40" transform="rotate(96 558.1 596.1)"/>
<ellipse cx="465.4" cy="578.1" rx="2.6" ry="2.4" fill="#7a5a40" transform="rotate(19 465.4 578.1)"/>
<ellipse cx="535.6" cy="628.6" rx="1.5" ry="1.0" fill="#6b4d38" transform="rotate(170 535.6 628.6)"/>
<ellipse cx="516.3" cy="606.4" rx="2.4" ry="2.3" fill="#5a4234" transform="rotate(38 516.3 606.4)"/>
<ellipse cx="402.7" cy="549.6" rx="1.8" ry="1.1" fill="#7a5a40" transform="rotate(60 402.7 549.6)"/>
<ellipse cx="558.1" cy="620.8" rx="1.5" ry="0.9" fill="#7a5a40" transform="rotate(33 558.1 620.8)"/>
<ellipse cx="556.6" cy="607.1" rx="1.7" ry="1.2" fill="#5a4234" transform="rotate(27 556.6 607.1)"/>
<ellipse cx="552.2" cy="635.3" rx="2.2" ry="2.2" fill="#7a5a40" transform="rotate(61 552.2 635.3)"/>
<ellipse cx="528.3" cy="639.9" rx="2.5" ry="1.7" fill="#4d3a33" transform="rotate(170 528.3 639.9)"/>
<ellipse cx="412.0" cy="564.9" rx="1.6" ry="1.5" fill="#4d3a33" transform="rotate(14 412.0 564.9)"/>
<ellipse cx="505.8" cy="626.1" rx="1.8" ry="1.5" fill="#5a4234" transform="rotate(112 505.8 626.1)"/>
<ellipse cx="426.8" cy="557.8" rx="2.2" ry="2.1" fill="#7a5a40" transform="rotate(77 426.8 557.8)"/>
<ellipse cx="444.5" cy="566.3" rx="1.6" ry="0.9" fill="#7a5a40" transform="rotate(131 444.5 566.3)"/>
<ellipse cx="560.8" cy="618.0" rx="1.8" ry="1.0" fill="#7a5a40" transform="rotate(144 560.8 618.0)"/>
<ellipse cx="532.8" cy="608.3" rx="1.4" ry="1.0" fill="#4d3a33" transform="rotate(87 532.8 608.3)"/>
<ellipse cx="547.3" cy="619.3" rx="1.4" ry="1.3" fill="#6b4d38" transform="rotate(160 547.3 619.3)"/>
<ellipse cx="477.3" cy="593.5" rx="1.7" ry="1.6" fill="#7a5a40" transform="rotate(45 477.3 593.5)"/>
<ellipse cx="436.0" cy="564.5" rx="1.4" ry="0.8" fill="#7a5a40" transform="rotate(156 436.0 564.5)"/>
<ellipse cx="397.5" cy="561.5" rx="1.9" ry="1.6" fill="#7a5a40" transform="rotate(56 397.5 561.5)"/>
<ellipse cx="425.0" cy="574.7" rx="2.3" ry="1.3" fill="#5a4234" transform="rotate(117 425.0 574.7)"/>
<ellipse cx="417.7" cy="561.7" rx="1.7" ry="1.5" fill="#7a5a40" transform="rotate(66 417.7 561.7)"/>
<ellipse cx="535.7" cy="635.7" rx="2.1" ry="1.6" fill="#7a5a40" transform="rotate(39 535.7 635.7)"/>
<ellipse cx="553.0" cy="624.3" rx="2.0" ry="1.4" fill="#4d3a33" transform="rotate(20 553.0 624.3)"/>
<ellipse cx="510.4" cy="583.4" rx="1.5" ry="1.5" fill="#4d3a33" transform="rotate(43 510.4 583.4)"/>
<ellipse cx="517.0" cy="570.0" rx="1.2" ry="0.8" fill="#7a5a40" transform="rotate(126 517.0 570.0)"/>
<ellipse cx="497.2" cy="621.0" rx="2.0" ry="1.8" fill="#6b4d38" transform="rotate(75 497.2 621.0)"/>
<ellipse cx="496.9" cy="615.7" rx="2.8" ry="2.2" fill="#6b4d38" transform="rotate(164 496.9 615.7)"/>
<ellipse cx="392.9" cy="530.3" rx="1.4" ry="1.3" fill="#6b4d38" transform="rotate(149 392.9 530.3)"/>
<ellipse cx="540.3" cy="595.1" rx="2.6" ry="1.9" fill="#5a4234" transform="rotate(84 540.3 595.1)"/>
<ellipse cx="550.8" cy="621.3" rx="1.9" ry="1.1" fill="#7a5a40" transform="rotate(77 550.8 621.3)"/>
</g>
<g filter="url(#b1)">
<ellipse cx="483" cy="443" rx="6" ry="4" transform="rotate(25 483 443)" fill="#4d3631"/>
<ellipse cx="518" cy="447" rx="3" ry="2.2" transform="rotate(0 518 447)" fill="#4a3431"/>
<ellipse cx="532" cy="451" rx="4" ry="2.4" transform="rotate(10 532 451)" fill="#54403a"/>
<ellipse cx="473" cy="435" rx="3" ry="2" transform="rotate(0 473 435)" fill="#4a3a3a"/>
<ellipse cx="496" cy="436" rx="2.4" ry="1.8" transform="rotate(0 496 436)" fill="#4a3a3a"/>
<ellipse cx="601" cy="476" rx="2.6" ry="7" transform="rotate(-8 601 476)" fill="#4a3431"/>
<ellipse cx="622" cy="501" rx="4" ry="3.4" transform="rotate(0 622 501)" fill="#4a3431"/>
<ellipse cx="606" cy="500" rx="2.2" ry="4" transform="rotate(0 606 500)" fill="#54403a"/>
<ellipse cx="557" cy="456" rx="3.6" ry="2.4" transform="rotate(15 557 456)" fill="#5a443c"/>
<ellipse cx="440" cy="425" rx="4" ry="2.4" transform="rotate(20 440 425)" fill="#6a4a3a"/>
<ellipse cx="540" cy="612" rx="5" ry="6" transform="rotate(0 540 612)" fill="#4d3a33"/>
<ellipse cx="508" cy="622" rx="4" ry="4" transform="rotate(0 508 622)" fill="#4d3a33"/>
<ellipse cx="455" cy="575" rx="4" ry="3" transform="rotate(0 455 575)" fill="#5a4030"/>
<ellipse cx="425" cy="560" rx="3" ry="4" transform="rotate(0 425 560)" fill="#5a4030"/>
<ellipse cx="560" cy="640" rx="4" ry="3" transform="rotate(0 560 640)" fill="#4d3a33"/>
</g>
<ellipse cx="431" cy="443" rx="7" ry="5" transform="rotate(30 431 443)" fill="#2b2f45" filter="url(#b1)"/>
</g>
<rect x="226" y="128.0" width="10.8" height="9.5" fill="#ffcccc"/>
<text x="226.6" y="135.3" font-size="8.3" fill="#2c2a2a" textLength="9.95" lengthAdjust="spacingAndGlyphs" font-weight="bold" letter-spacing="0.61">10</text>
<rect x="421.8" y="128.0" width="169.2" height="9.5" fill="#ffcccc"/>
<text x="422.2" y="135.3" font-size="8.3" fill="#2c2a2a" textLength="169.69" lengthAdjust="spacingAndGlyphs" font-weight="bold" letter-spacing="1.43">BAKE: RECIPES FROM MY KITCHEN</text>
<rect x="1091.8" y="128.0" width="169.2" height="9.5" fill="#ffcccc"/>
<text x="1092.2" y="135.3" font-size="8.3" fill="#2c2a2a" textLength="169.69" lengthAdjust="spacingAndGlyphs" font-weight="bold" letter-spacing="1.43">BAKE: RECIPES FROM MY KITCHEN</text>
<rect x="1449.4" y="128.0" width="10.4" height="9.5" fill="#ffcccc"/>
<text x="1450" y="135.3" font-size="8.3" fill="#2c2a2a" textLength="9.45" lengthAdjust="spacingAndGlyphs" font-weight="bold" letter-spacing="0.5">11</text>
<rect x="924.8" y="336.1" width="310.6" height="22.2" fill="#ffcccc"/>
<text x="925.6" y="353.1" font-size="17" fill="#2c2a2a" textLength="313.67" lengthAdjust="spacingAndGlyphs" letter-spacing="4.75">BLUEBERRY BANANA BREAD</text>
<rect x="925" y="399.9" width="160" height="10.5" fill="#ffcccc"/>
<text x="926" y="407.9" font-size="8.4" fill="#2c2a2a" textLength="160.67" lengthAdjust="spacingAndGlyphs" letter-spacing="2.52">PREP 20 MIN | COOK 40 MIN</text>
<rect x="925" y="458.1" width="94.6" height="13" fill="#ffcccc"/>
<text x="926" y="468.1" font-size="10" fill="#2c2a2a" textLength="95.86" lengthAdjust="spacingAndGlyphs" letter-spacing="3.18">INGREDIENTS</text>
<rect x="1135" y="458.1" width="58.6" height="13" fill="#ffcccc"/>
<text x="1135.8" y="468.1" font-size="10" fill="#2c2a2a" textLength="60.23" lengthAdjust="spacingAndGlyphs" letter-spacing="3.37">METHOD</text>
<rect x="925.6" y="506.7" width="107.6" height="11.8" fill="#ffcccc"/>
<text x="926.2" y="516.0" font-size="9.5" fill="#2c2a2a" textLength="106.60" lengthAdjust="spacingAndGlyphs" stroke="#2c2a2a" stroke-width="0.25">100g golden caster sugar</text>
<rect x="925.6" y="532.9" width="72.5" height="11.8" fill="#ffcccc"/>
<text x="926.2" y="542.2" font-size="9.5" fill="#2c2a2a" textLength="71.50" lengthAdjust="spacingAndGlyphs" stroke="#2c2a2a" stroke-width="0.25">1 tbsp plain flour</text>
<rect x="925.6" y="559.1" width="103.2" height="11.8" fill="#ffcccc"/>
<text x="926.2" y="568.4" font-size="9.5" fill="#2c2a2a" textLength="102.20" lengthAdjust="spacingAndGlyphs" stroke="#2c2a2a" stroke-width="0.25">zest and juice 2 oranges</text>
<rect x="925.6" y="611.5" width="67.5" height="11.8" fill="#ffcccc"/>
<text x="926.2" y="620.8" font-size="9.5" fill="#2c2a2a" textLength="66.50" lengthAdjust="spacingAndGlyphs" stroke="#2c2a2a" stroke-width="0.25">For the topping</text>
<rect x="925.6" y="637.7" width="89.9" height="11.8" fill="#ffcccc"/>
<text x="926.2" y="647.0" font-size="9.5" fill="#2c2a2a" textLength="88.90" lengthAdjust="spacingAndGlyphs" stroke="#2c2a2a" stroke-width="0.25">50g ground almonds</text>
<rect x="925.6" y="663.9" width="93.3" height="11.8" fill="#ffcccc"/>
<text x="926.2" y="673.2" font-size="9.5" fill="#2c2a2a" textLength="92.30" lengthAdjust="spacingAndGlyphs" stroke="#2c2a2a" stroke-width="0.25">300g self-raising flour</text>
<rect x="925.6" y="690.1" width="87.4" height="11.8" fill="#ffcccc"/>
<text x="926.2" y="699.4" font-size="9.5" fill="#2c2a2a" textLength="86.40" lengthAdjust="spacingAndGlyphs" stroke="#2c2a2a" stroke-width="0.25">1 tsp baking powder</text>
<rect x="925.6" y="716.3" width="66.5" height="11.8" fill="#ffcccc"/>
<text x="926.2" y="725.6" font-size="9.5" fill="#2c2a2a" textLength="65.50" lengthAdjust="spacingAndGlyphs" stroke="#2c2a2a" stroke-width="0.25">85g cold butter</text>
<rect x="925.6" y="742.5" width="113.4" height="11.8" fill="#ffcccc"/>
<text x="926.2" y="751.8" font-size="9.5" fill="#2c2a2a" textLength="112.40" lengthAdjust="spacingAndGlyphs" stroke="#2c2a2a" stroke-width="0.25">4 tbsp golden caster sugar</text>
<rect x="925.6" y="768.7" width="132.6" height="11.8" fill="#ffcccc"/>
<text x="926.2" y="778.0" font-size="9.5" fill="#2c2a2a" textLength="131.60" lengthAdjust="spacingAndGlyphs" stroke="#2c2a2a" stroke-width="0.25">150g pot natural full-fat yogurt</text>
<rect x="925.6" y="794.9" width="83.1" height="11.8" fill="#ffcccc"/>
<text x="926.2" y="804.2" font-size="9.5" fill="#2c2a2a" textLength="82.10" lengthAdjust="spacingAndGlyphs" stroke="#2c2a2a" stroke-width="0.25">1 tsp vanilla extract</text>
<rect x="925.6" y="821.1" width="101.9" height="11.8" fill="#ffcccc"/>
<text x="926.2" y="830.4" font-size="9.5" fill="#2c2a2a" textLength="100.90" lengthAdjust="spacingAndGlyphs" stroke="#2c2a2a" stroke-width="0.25">handful flaked almonds</text>
<rect x="1135" y="504.9" width="256.4" height="11.8" fill="#ffcccc"/>
<text x="1135.6" y="514.2" font-size="9.5" fill="#2c2a2a" textLength="253.40" lengthAdjust="spacingAndGlyphs" stroke="#2c2a2a" stroke-width="0.25">Heat oven to 200C/180C fan/gas 6. Mix plums, sugar, 1 tbsp</text>
<rect x="1135" y="521.2" width="283.8" height="11.8" fill="#ffcccc"/>
<text x="1135.6" y="530.5" font-size="9.5" fill="#2c2a2a" textLength="280.80" lengthAdjust="spacingAndGlyphs" stroke="#2c2a2a" stroke-width="0.25">flour and cinnamon in a large baking dish. Splash over the orange</text>
<rect x="1135" y="537.5" width="261.4" height="11.8" fill="#ffcccc"/>
<text x="1135.6" y="546.8" font-size="9.5" fill="#2c2a2a" textLength="258.40" lengthAdjust="spacingAndGlyphs" stroke="#2c2a2a" stroke-width="0.25">juice, cover with foil, then bake for 30 mins until the fruit has</text>
<rect x="1135" y="553.8" width="41.7" height="11.8" fill="#ffcccc"/>
<text x="1135.6" y="563.1" font-size="9.5" fill="#2c2a2a" textLength="38.70" lengthAdjust="spacingAndGlyphs" stroke="#2c2a2a" stroke-width="0.25">softened.</text>
<rect x="1135" y="606.0" width="276.0" height="11.8" fill="#ffcccc"/>
<text x="1135.6" y="615.3" font-size="9.5" fill="#2c2a2a" textLength="273.00" lengthAdjust="spacingAndGlyphs" stroke="#2c2a2a" stroke-width="0.25">Mix the ground almonds, zest and flour with the salt and baking</text>
<rect x="1135" y="622.3" width="256.4" height="11.8" fill="#ffcccc"/>
<text x="1135.6" y="631.6" font-size="9.5" fill="#2c2a2a" textLength="253.40" lengthAdjust="spacingAndGlyphs" stroke="#2c2a2a" stroke-width="0.25">powder in a food processor, then whizz in the butter until it</text>
<rect x="1135" y="638.6" width="268.7" height="11.8" fill="#ffcccc"/>
<text x="1135.6" y="647.9" font-size="9.5" fill="#2c2a2a" textLength="265.70" lengthAdjust="spacingAndGlyphs" stroke="#2c2a2a" stroke-width="0.25">disappears. Pulse in the sugar, tip into a large bowl, then make</text>
<rect x="1135" y="654.9" width="274.9" height="11.8" fill="#ffcccc"/>
<text x="1135.6" y="664.2" font-size="9.5" fill="#2c2a2a" textLength="271.90" lengthAdjust="spacingAndGlyphs" stroke="#2c2a2a" stroke-width="0.25">a well in the middle. Warm the yogurt, milk and vanilla together</text>
<rect x="1135" y="671.2" width="276.5" height="11.8" fill="#ffcccc"/>
<text x="1135.6" y="680.5" font-size="9.5" fill="#2c2a2a" textLength="273.50" lengthAdjust="spacingAndGlyphs" stroke="#2c2a2a" stroke-width="0.25">in the microwave for 1 min or in a pan; it should be hot and may</text>
<rect x="1135" y="687.5" width="272.1" height="11.8" fill="#ffcccc"/>
<text x="1135.6" y="696.8" font-size="9.5" fill="#2c2a2a" textLength="269.10" lengthAdjust="spacingAndGlyphs" stroke="#2c2a2a" stroke-width="0.25">well go a bit lumpy-looking. Tip into the bowl and quickly work</text>
<rect x="1135" y="703.8" width="276.8" height="11.8" fill="#ffcccc"/>
<text x="1135.6" y="713.1" font-size="9.5" fill="#2c2a2a" textLength="273.80" lengthAdjust="spacingAndGlyphs" stroke="#2c2a2a" stroke-width="0.25">into the flour mix using a cutlery knife. As soon as it’s all in, stop.</text>
<rect x="1135" y="720.1" width="177.7" height="11.8" fill="#ffcccc"/>
<text x="1135.6" y="729.4" font-size="9.5" fill="#2c2a2a" textLength="174.70" lengthAdjust="spacingAndGlyphs" stroke="#2c2a2a" stroke-width="0.25">The mix should be stiffish but spoonable.</text>
<rect x="1135" y="772.5" width="254.5" height="11.8" fill="#ffcccc"/>
<text x="1135.6" y="781.8" font-size="9.5" fill="#2c2a2a" textLength="251.50" lengthAdjust="spacingAndGlyphs" stroke="#2c2a2a" stroke-width="0.25">Take the plums from the oven, uncover, then top with 6 big</text>
<rect x="1135" y="788.8" width="254.5" height="11.8" fill="#ffcccc"/>
<text x="1135.6" y="798.1" font-size="9.5" fill="#2c2a2a" textLength="251.50" lengthAdjust="spacingAndGlyphs" stroke="#2c2a2a" stroke-width="0.25">spoonfuls of batter. Scatter with flaked almonds and a little</text>
<rect x="1135" y="805.1" width="269.5" height="11.8" fill="#ffcccc"/>
<text x="1135.6" y="814.4" font-size="9.5" fill="#2c2a2a" textLength="266.50" lengthAdjust="spacingAndGlyphs" stroke="#2c2a2a" stroke-width="0.25">sugar. Bake for 30-35 mins until topping is golden and the fruit</text>
<rect x="1135" y="821.4" width="262.9" height="11.8" fill="#ffcccc"/>
<text x="1135.6" y="830.7" font-size="9.5" fill="#2c2a2a" textLength="259.90" lengthAdjust="spacingAndGlyphs" stroke="#2c2a2a" stroke-width="0.25">bubbles underneath. Scatter with more caster sugar to serve.</text>
<line x1="226.5" y1="129.5" x2="757.5" y2="129.5" stroke="#ff0000" stroke-width="1" stroke-dasharray="1 3.7"/>
<line x1="254.5" y1="129.5" x2="344.5" y2="129.5" stroke="#ff0000" stroke-width="1" stroke-dasharray="1 3.7" stroke-dashoffset="2.35"/>
<line x1="226.5" y1="129.5" x2="226.5" y2="160.5" stroke="#ff0000" stroke-width="1" stroke-dasharray="1 3.7"/>
<line x1="254.5" y1="129.5" x2="254.5" y2="160.5" stroke="#ff0000" stroke-width="1" stroke-dasharray="1 3.7"/>
<line x1="344.5" y1="129.5" x2="344.5" y2="160.5" stroke="#ff0000" stroke-width="1" stroke-dasharray="1 3.7"/>
<line x1="757.5" y1="129.5" x2="757.5" y2="160.5" stroke="#ff0000" stroke-width="1" stroke-dasharray="1 3.7"/>
<line x1="226.5" y1="160.5" x2="254.5" y2="160.5" stroke="#ff0000" stroke-width="1" stroke-dasharray="1 3.7"/>
<line x1="924.5" y1="129.5" x2="1459.5" y2="129.5" stroke="#ff0000" stroke-width="1" stroke-dasharray="1 3.7"/>
<line x1="1337.5" y1="129.5" x2="1427.5" y2="129.5" stroke="#ff0000" stroke-width="1" stroke-dasharray="1 3.7" stroke-dashoffset="2.35"/>
<line x1="924.5" y1="129.5" x2="924.5" y2="160.5" stroke="#ff0000" stroke-width="1" stroke-dasharray="1 3.7"/>
<line x1="1337.5" y1="129.5" x2="1337.5" y2="160.5" stroke="#ff0000" stroke-width="1" stroke-dasharray="1 3.7"/>
<line x1="1427.5" y1="129.5" x2="1427.5" y2="160.5" stroke="#ff0000" stroke-width="1" stroke-dasharray="1 3.7"/>
<line x1="1459.5" y1="129.5" x2="1459.5" y2="160.5" stroke="#ff0000" stroke-width="1" stroke-dasharray="1 3.7"/>
<line x1="1427.5" y1="160.5" x2="1459.5" y2="160.5" stroke="#ff0000" stroke-width="1" stroke-dasharray="1 3.7"/>
<rect x="259.5" y="160.5" width="503" height="754" fill="none" stroke="#4fff4f" stroke-width="1"/>
<rect x="1076.5" y="113.5" width="222" height="37" fill="none" stroke="#4fff4f" stroke-width="1"/>
<rect x="925.5" y="339.5" width="503.0" height="21.0" fill="none" stroke="#ff0000" stroke-width="1"/>
<rect x="925.5" y="401.5" width="504.0" height="14.0" fill="none" stroke="#ff0000" stroke-width="1"/>
<rect x="925.5" y="459.5" width="168.0" height="17.0" fill="none" stroke="#ff0000" stroke-width="1"/>
<rect x="1134.5" y="459.5" width="185.0" height="17.0" fill="none" stroke="#ff0000" stroke-width="1"/>
<rect x="925.5" y="508.5" width="168.0" height="404.0" fill="none" stroke="#ff0000" stroke-width="1"/>
<rect x="1134.5" y="506.5" width="294.0" height="408.0" fill="none" stroke="#ff0000" stroke-width="1"/>
<rect x="254.5" y="160.5" width="503" height="754" fill="none" stroke="#ff4fff" stroke-width="1"/>
<rect x="924.5" y="160.5" width="503" height="754" fill="none" stroke="#ff4fff" stroke-width="1"/>
<line x1="254.5" y1="161" x2="254.5" y2="914" stroke="#9933ff" stroke-width="1"/>
<line x1="422.5" y1="161" x2="422.5" y2="914" stroke="#9933ff" stroke-width="1"/>
<line x1="589.5" y1="161" x2="589.5" y2="914" stroke="#9933ff" stroke-width="1"/>
<line x1="757.5" y1="161" x2="757.5" y2="914" stroke="#9933ff" stroke-width="1"/>
<line x1="924.5" y1="161" x2="924.5" y2="914" stroke="#9933ff" stroke-width="1"/>
<line x1="1092.5" y1="161" x2="1092.5" y2="914" stroke="#9933ff" stroke-width="1"/>
<line x1="1259.5" y1="161" x2="1259.5" y2="914" stroke="#9933ff" stroke-width="1"/>
<line x1="1427.5" y1="161" x2="1427.5" y2="914" stroke="#9933ff" stroke-width="1"/>
<line x1="182" y1="353.5" x2="1500" y2="353.5" stroke="#00ffff" stroke-width="1"/>
<line x1="182" y1="408.5" x2="1500" y2="408.5" stroke="#00ffff" stroke-width="1"/>
<line x1="182" y1="468.5" x2="1500" y2="468.5" stroke="#00ffff" stroke-width="1"/>
<line x1="182" y1="507.5" x2="1500" y2="507.5" stroke="#00ffff" stroke-width="1"/>
<line x1="463.5" y1="88" x2="463.5" y2="997" stroke="#00ffff" stroke-width="1"/>
<line x1="1134.5" y1="88" x2="1134.5" y2="997" stroke="#00ffff" stroke-width="1"/>
<rect x="267.6" y="156.6" width="14.8" height="6.6" rx="3.3" fill="#e9eef8"/>
<rect x="268.6" y="157.8" width="7" height="4.2" rx="2.1" fill="none" stroke="#3f78d8" stroke-width="1.2"/>
<rect x="274.4" y="157.8" width="7" height="4.2" rx="2.1" fill="none" stroke="#3f78d8" stroke-width="1.2"/>
<rect x="0" y="0" width="1913" height="30" fill="#535353"/>
<rect x="0" y="30" width="1913" height="1" fill="#3b3b3b"/>
<rect x="42" y="31" width="1622" height="28" fill="#424242"/>
<rect x="42" y="31" width="331" height="28" fill="#535353"/>
<rect x="373" y="31" width="1" height="28" fill="#3b3b3b"/>
<rect x="42" y="59" width="1622" height="1" fill="#3b3b3b"/>
<rect x="10" y="7" width="16.3" height="15" rx="2" fill="#49021f"/>
<text x="13.8" y="18.2" font-size="11.2" fill="#ff3b6b" textLength="8.50" lengthAdjust="spacingAndGlyphs" font-weight="bold">Id</text>
<path d="M52.1 7.4 L61.4 16.1 L60.2 17.4 L59.2 16.6 L59.2 23.2 L54 23.2 L54 17.3 L50.2 17.3 L50.2 23.2 L45 23.2 L45 16.6 L44 17.4 L42.8 16.1 Z" fill="#cdcdcd"/>
<text x="83" y="19.5" font-size="13.2" fill="#e8e8e8" textLength="18.25" lengthAdjust="spacingAndGlyphs" stroke="#e8e8e8" stroke-width="0.22">File</text>
<text x="118.25" y="19.5" font-size="13.2" fill="#e8e8e8" textLength="19.75" lengthAdjust="spacingAndGlyphs" stroke="#e8e8e8" stroke-width="0.22">Edit</text>
<text x="155" y="19.5" font-size="13.2" fill="#e8e8e8" textLength="36.25" lengthAdjust="spacingAndGlyphs" stroke="#e8e8e8" stroke-width="0.22">Layout</text>
<text x="208.25" y="19.5" font-size="13.2" fill="#e8e8e8" textLength="25.25" lengthAdjust="spacingAndGlyphs" stroke="#e8e8e8" stroke-width="0.22">Type</text>
<text x="250.75" y="19.5" font-size="13.2" fill="#e8e8e8" textLength="35.25" lengthAdjust="spacingAndGlyphs" stroke="#e8e8e8" stroke-width="0.22">Object</text>
<text x="303.25" y="19.5" font-size="13.2" fill="#e8e8e8" textLength="28.25" lengthAdjust="spacingAndGlyphs" stroke="#e8e8e8" stroke-width="0.22">Table</text>
<text x="348.75" y="19.5" font-size="13.2" fill="#e8e8e8" textLength="25.25" lengthAdjust="spacingAndGlyphs" stroke="#e8e8e8" stroke-width="0.22">View</text>
<text x="392" y="19.5" font-size="13.2" fill="#e8e8e8" textLength="43.75" lengthAdjust="spacingAndGlyphs" stroke="#e8e8e8" stroke-width="0.22">Window</text>
<text x="453.25" y="19.5" font-size="13.2" fill="#e8e8e8" textLength="24.75" lengthAdjust="spacingAndGlyphs" stroke="#e8e8e8" stroke-width="0.22">Help</text>
<text x="56" y="50" font-size="11.2" fill="#f2f2f2" textLength="285.20" lengthAdjust="spacingAndGlyphs" font-weight="bold">*Recipe Book_without images.indd @ 87% [Converted]</text>
<path d="M351.8 43.2 L357.2 48.6 M357.2 43.2 L351.8 48.6" stroke="#e8e8e8" stroke-width="1.7" fill="none"/>
<rect x="1458.8" y="8.8" width="16.4" height="12.8" fill="none" stroke="#cdcdcd" stroke-width="1.3"/>
<path d="M1465.6 21.8 L1463 17.6 Q1462.6 16.4 1463.8 16.4 L1465.6 17.6 L1465.6 11.4 Q1466.5 10.2 1467.4 11.4 L1467.4 15.2 L1471.2 16.2 Q1472.4 16.6 1472.2 18 L1471.6 21.8 Z" fill="#cdcdcd" stroke="#535353" stroke-width="0.6"/>
<path d="M1501 19.5 C1499.5 17.5 1496.9 15.6 1496.9 12.2 A6.4 6.4 0 0 1 1509.7 12.2 C1509.7 15.6 1507.1 17.5 1505.6 19.5 Z" fill="none" stroke="#cdcdcd" stroke-width="1.2"/>
<path d="M1501 20.3 H1505.6 V22 Q1503.3 24.6 1501 22 Z" fill="#cdcdcd"/>
<path d="M1537.4 12.6 H1533.9 V22 H1548.2 V12.6 H1544.8" fill="none" stroke="#cdcdcd" stroke-width="1.5"/>
<path d="M1541 17 V8.5" stroke="#cdcdcd" stroke-width="1.6" fill="none"/>
<path d="M1537 10.6 L1541 6.4 L1545 10.6 Z" fill="#cdcdcd"/>
<circle cx="1550.1" cy="9.4" r="3.1" fill="#3c97f3"/>
<rect x="1565" y="5.5" width="1" height="19" fill="#656565"/>
<text x="1578.4" y="18" font-size="12.8" fill="#e8e8e8" textLength="49.60" lengthAdjust="spacingAndGlyphs" stroke="#e8e8e8" stroke-width="0.22">Essentials</text>
<path d="M1638.2 14.2 L1641.6 17.6 L1645 14.2" fill="none" stroke="#cdcdcd" stroke-width="1.5"/>
<rect x="1658.6" y="5.5" width="1" height="19" fill="#656565"/>
<rect x="1668.5" y="4.5" width="129" height="19.5" rx="2" fill="#454545" stroke="#6b6b6b" stroke-width="1"/>
<circle cx="1675.6" cy="11.6" r="3.2" fill="none" stroke="#cdcdcd" stroke-width="1.3"/>
<path d="M1677.9 14 L1681.4 17.6" stroke="#cdcdcd" stroke-width="1.6"/>
<path d="M1682.8 11.6 L1685.6 14.2 L1688.4 11.6" fill="none" stroke="#cdcdcd" stroke-width="1.2"/>
<text x="1694.5" y="17.2" font-size="11.2" fill="#8d8d8d" textLength="58.00" lengthAdjust="spacingAndGlyphs">Adobe Stock</text>
<path d="M1814.5 0 V16 Q1814.5 18.5 1817 18.5 H1913" fill="none" stroke="#6a6864" stroke-width="1"/>
<rect x="1842" y="0" width="1" height="18" fill="#6a6864"/>
<rect x="1869" y="0" width="1" height="18" fill="#6a6864"/>
<rect x="1823" y="11" width="10.2" height="3" fill="#cdcdcd"/>
<rect x="1855.1" y="6.2" width="6" height="5.8" fill="none" stroke="#cdcdcd" stroke-width="1.8"/>
<rect x="1851" y="9.4" width="6" height="4.8" fill="#535353" stroke="#cdcdcd" stroke-width="1.8"/>
<path d="M1888.6 5.6 L1897.2 12.8 M1897.2 5.6 L1888.6 12.8" stroke="#cdcdcd" stroke-width="2.4" fill="none"/>
<rect x="0" y="31" width="39" height="1001" fill="#535353"/>
<rect x="0" y="31" width="1" height="1001" fill="#474747"/>
<rect x="39" y="31" width="1" height="1001" fill="#3a3a3a"/>
<rect x="40" y="31" width="1" height="1001" fill="#464646"/>
<rect x="41" y="31" width="1" height="1001" fill="#3a3a3a"/>
<rect x="1" y="31" width="38" height="10.6" fill="#424242"/>
<rect x="0" y="41.6" width="39" height="1" fill="#3b3b3b"/>
<path d="M6 34.2 L9.4 36.7 L6 39.2 L7 36.7 Z M9.8 34.2 L13.2 36.7 L9.8 39.2 L10.8 36.7 Z" fill="#cdcdcd" stroke="#cdcdcd" stroke-width="0.5"/>
<rect x="10" y="46" width="1" height="4" fill="#3a3a3a"/>
<rect x="12" y="46" width="1" height="4" fill="#3a3a3a"/>
<rect x="14" y="46" width="1" height="4" fill="#3a3a3a"/>
<rect x="16" y="46" width="1" height="4" fill="#3a3a3a"/>
<rect x="18" y="46" width="1" height="4" fill="#3a3a3a"/>
<rect x="20" y="46" width="1" height="4" fill="#3a3a3a"/>
<rect x="22" y="46" width="1" height="4" fill="#3a3a3a"/>
<rect x="24" y="46" width="1" height="4" fill="#3a3a3a"/>
<rect x="26" y="46" width="1" height="4" fill="#3a3a3a"/>
<rect x="28" y="46" width="1" height="4" fill="#3a3a3a"/>
<path d="M15.3 62 L26.2 71.2 L19.8 72.3 L15.3 76.9 Z" fill="none" stroke="#cdcdcd" stroke-width="1.4" stroke-linejoin="miter"/>
<path d="M15 85.2 L27.2 95.8 L19.8 96.8 L15 102 Z" fill="#cdcdcd"/>
<path d="M21.4 122 H14.4 V110.2 H21.4 L25.4 114.2 V116.4 M21.2 110.4 V114.4 H25.2" fill="none" stroke="#cdcdcd" stroke-width="1.3"/>
<path d="M23.2 116.6 L28.8 121 L25.4 121.6 L23.2 124.8 Z" fill="#cdcdcd"/>
<line x1="11.7" y1="134.2" x2="11.7" y2="148" stroke="#cdcdcd" stroke-width="1.6"/>
<line x1="28.1" y1="134.2" x2="28.1" y2="148" stroke="#cdcdcd" stroke-width="1.6"/>
<line x1="15" y1="141.1" x2="25" y2="141.1" stroke="#cdcdcd" stroke-width="1.4"/>
<path d="M13.4 141.1 L17 138 V144.2 Z M26.4 141.1 L22.8 138 V144.2 Z" fill="#cdcdcd"/>
<path d="M13.8 162.8 V171.8 H26.4 V162.8" fill="none" stroke="#cdcdcd" stroke-width="1.5"/>
<rect x="16.2" y="165.4" width="1.7" height="1.7" fill="#cdcdcd"/>
<rect x="16.2" y="168.4" width="1.7" height="1.7" fill="#cdcdcd"/>
<rect x="19.099999999999998" y="165.4" width="1.7" height="1.7" fill="#cdcdcd"/>
<rect x="19.099999999999998" y="168.4" width="1.7" height="1.7" fill="#cdcdcd"/>
<rect x="22.0" y="165.4" width="1.7" height="1.7" fill="#cdcdcd"/>
<rect x="22.0" y="168.4" width="1.7" height="1.7" fill="#cdcdcd"/>
<path d="M15 157.2 L19.4 161.6" stroke="#cdcdcd" stroke-width="1.4"/><path d="M20.8 163 V158.6 L16.4 163 Z" fill="#cdcdcd"/>
<path d="M33.0 172.2 V175.39999999999998 H29.8 Z" fill="#cdcdcd"/>
<rect x="2" y="178" width="36" height="1" fill="#484848"/>
<rect x="6" y="181" width="28" height="21.8" rx="3" fill="#2d2d2d"/>
<path d="M13 185.6 H27 V189.2 H25.6 V187.4 H21 V196.8 H23.2 V198.4 H16.8 V196.8 H19 V187.4 H14.4 V189.2 H13 Z" fill="#e6e6e6"/>
<path d="M33.0 198.6 V201.79999999999998 H29.8 Z" fill="#e0e0e0"/>
<line x1="12.6" y1="223" x2="27" y2="208.6" stroke="#cdcdcd" stroke-width="1.5"/>
<g transform="translate(20,240.6) rotate(45)"><path d="M-3.2 -9.6 H3.2 V-6.4 H-3.2 Z" fill="#cdcdcd"/><path d="M-3.6 -5.4 H3.6 L4.4 0.6 L0 10.4 L-4.4 0.6 Z" fill="#cdcdcd"/><path d="M0 10.4 V3" stroke="#535353" stroke-width="1"/><circle cx="0" cy="2.4" r="1.1" fill="#535353"/></g>
<path d="M33.0 245.6 V248.79999999999998 H29.8 Z" fill="#cdcdcd"/>
<g transform="translate(20,264.6) rotate(45)"><path d="M-2.8 -9.8 H2.8 V-7.4 H-2.8 Z" fill="#cdcdcd"/><path d="M-2.8 -6.4 H2.8 V5 L0 10.6 L-2.8 5 Z" fill="#cdcdcd"/><path d="M-1.4 6.6 L0 9 L1.4 6.6 Z" fill="#535353"/></g>
<path d="M33.0 269.6 V272.8 H29.8 Z" fill="#cdcdcd"/>
<rect x="12.6" y="281.6" width="15" height="12.8" fill="none" stroke="#cdcdcd" stroke-width="1.3"/><path d="M12.6 281.6 L27.6 294.4 M27.6 281.6 L12.6 294.4" stroke="#cdcdcd" stroke-width="1.1"/>
<path d="M33.0 294 V297.2 H29.8 Z" fill="#cdcdcd"/>
<rect x="12.6" y="305.6" width="15" height="12.8" fill="#6a6a6a" stroke="#cdcdcd" stroke-width="1.3"/>
<path d="M33.0 318 V321.2 H29.8 Z" fill="#cdcdcd"/>
<rect x="2" y="325" width="36" height="1" fill="#484848"/>
<circle cx="26" cy="333.8" r="2.5" fill="none" stroke="#cdcdcd" stroke-width="1.3"/><circle cx="26" cy="344" r="2.5" fill="none" stroke="#cdcdcd" stroke-width="1.3"/>
<path d="M12 334.8 L24 342.6 M12 343.2 L24 335.2" stroke="#cdcdcd" stroke-width="1.7" fill="none"/>
<rect x="17" y="357" width="12" height="12" fill="none" stroke="#cdcdcd" stroke-width="1.2" stroke-dasharray="2 1.4"/>
<rect x="16" y="356" width="2" height="2" fill="#cdcdcd"/>
<rect x="22" y="356" width="2" height="2" fill="#cdcdcd"/>
<rect x="28" y="356" width="2" height="2" fill="#cdcdcd"/>
<rect x="28" y="362" width="2" height="2" fill="#cdcdcd"/>
<rect x="16" y="368" width="2" height="2" fill="#cdcdcd"/>
<rect x="22" y="368" width="2" height="2" fill="#cdcdcd"/>
<rect x="28" y="368" width="2" height="2" fill="#cdcdcd"/>
<path d="M11 354.6 L20.6 362.6 L14.6 363.4 L11 368 Z" fill="#cdcdcd" stroke="#535353" stroke-width="0.6"/>
<path d="M33.0 369.6 V372.8 H29.8 Z" fill="#cdcdcd"/>
<defs><linearGradient id="gsw" x1="0" x2="1" y1="0" y2="0"><stop offset="0" stop-color="#b9b9b9"/><stop offset="0.55" stop-color="#6a6a6a"/><stop offset="1" stop-color="#474747"/></linearGradient><linearGradient id="gfe" x1="0" x2="0" y1="0" y2="1"><stop offset="0" stop-color="#5c5c5c"/><stop offset="0.45" stop-color="#808080"/><stop offset="1" stop-color="#bdbdbd"/></linearGradient><radialGradient id="gfill" cx="0.5" cy="0.5" r="0.62"><stop offset="0" stop-color="#3c3c3c"/><stop offset="0.45" stop-color="#76777c"/><stop offset="1" stop-color="#cfd0d8"/></radialGradient></defs>
<rect x="12.6" y="381" width="15" height="12.6" fill="url(#gsw)" stroke="#cdcdcd" stroke-width="1.2"/>
<rect x="12.6" y="405" width="15" height="12.6" fill="url(#gfe)" stroke="#cdcdcd" stroke-width="1.2"/>
<rect x="14.6" y="406.4" width="2.2" height="2.2" fill="#777"/>
<rect x="19.0" y="406.4" width="2.2" height="2.2" fill="#777"/>
<rect x="23.4" y="406.4" width="2.2" height="2.2" fill="#777"/>
<rect x="2" y="424" width="36" height="1" fill="#484848"/>
<path d="M13 431 H27 V441.4 L23.4 445 H13 Z" fill="#cdcdcd"/><path d="M23.4 445 V441.4 H27" fill="#535353" stroke="#cdcdcd" stroke-width="0.8"/>
<rect x="15" y="433.6" width="10" height="1.3" fill="#535353"/>
<rect x="15" y="436.40000000000003" width="10" height="1.3" fill="#535353"/>
<rect x="15" y="439.20000000000005" width="6" height="1.3" fill="#535353"/>
<g transform="translate(20,461.6) rotate(45)"><rect x="-2.4" y="-10.2" width="4.8" height="5.4" rx="2.2" fill="#cdcdcd"/><rect x="-3.8" y="-5.6" width="7.6" height="2" fill="#cdcdcd"/><path d="M-2 -3.6 H2 V6.6 L0 10 L-2 6.6 Z" fill="none" stroke="#cdcdcd" stroke-width="1.2"/></g>
<rect x="20.4" y="465.8" width="9.4" height="3.6" fill="#535353" stroke="#cdcdcd" stroke-width="1"/>
<rect x="23.2" y="466" width="1" height="3.2" fill="#cdcdcd"/>
<rect x="26" y="466" width="1" height="3.2" fill="#cdcdcd"/>
<path d="M33.6 469.4 V472.59999999999997 H30.4 Z" fill="#cdcdcd"/>
<path d="M16.6 494 C14.6 491.4 12.8 488.4 11.8 486.2 C11.4 485 12.8 484.4 13.6 485.4 L15.8 488 L15 481.2 C14.9 479.8 16.7 479.6 16.9 481 L17.9 486 L18.2 479.4 C18.3 478 20.1 478 20.2 479.4 L20.6 486 L22 480.4 C22.3 479.1 24 479.5 23.8 480.8 L23.2 487 L25.4 483.6 C26.1 482.5 27.6 483.3 27 484.5 C25.8 487.4 25.2 491 23.6 494 Z" fill="#cdcdcd"/>
<circle cx="18.4" cy="508.6" r="5.6" fill="none" stroke="#cdcdcd" stroke-width="1.5"/><path d="M22.4 512.8 L27.2 517.6" stroke="#cdcdcd" stroke-width="2.1" stroke-linecap="round"/>
<rect x="2" y="523" width="36" height="1" fill="#484848"/>
<rect x="9.2" y="531" width="7" height="7" fill="#1c1c1c" stroke="#d9d9d9" stroke-width="1"/>
<rect x="6" y="527.8" width="7" height="7" fill="#ffffff" stroke="#d9d9d9" stroke-width="1"/><path d="M6.4 534.4 L12.6 528.2" stroke="#ee2222" stroke-width="1.3"/>
<path d="M27 533.4 H31.4 V538.6" fill="none" stroke="#cdcdcd" stroke-width="1.3"/><path d="M24.6 533.4 L28 530.6 V536.2 Z M31.4 541.4 L28.6 538 H34.2 Z" fill="#cdcdcd"/>
<rect x="16.8" y="556.1" width="15.4" height="14.9" fill="#2b2b2b" stroke="#f1f0ea" stroke-width="4"/>
<rect x="6.2" y="545.4" width="18.8" height="18.6" fill="url(#gfill)" stroke="#d5d6dc" stroke-width="0.8"/>
<rect x="6" y="581" width="14" height="12.4" rx="2.5" fill="#2d2d2d"/><rect x="9.4" y="583.4" width="7.4" height="7.4" fill="none" stroke="#cdcdcd" stroke-width="1.2"/>
<path d="M24.8 583 H33.2 V585.6 H32.2 V584.6 H30 V589.8 H31.2 V591 H26.8 V589.8 H28 V584.6 H25.8 V585.6 H24.8 Z" fill="#cdcdcd"/>
<rect x="6" y="600.2" width="28" height="22" rx="3" fill="#2d2d2d"/><rect x="12.4" y="604" width="15.4" height="13.6" fill="url(#gfill)" stroke="#bfc0c6" stroke-width="0.8"/>
<path d="M33.0 617.6 V620.8000000000001 H29.8 Z" fill="#cdcdcd"/>
<rect x="17.6" y="638.6" width="9.4" height="6.4" fill="#cdcdcd"/>
<rect x="18.6" y="635" width="1.2" height="2.2" fill="#cdcdcd"/>
<rect x="13.6" y="638.8" width="2.6" height="1.2" fill="#cdcdcd"/>
<rect x="21.6" y="635" width="1.2" height="2.2" fill="#cdcdcd"/>
<rect x="13.6" y="641.4" width="2.6" height="1.2" fill="#cdcdcd"/>
<rect x="24.6" y="635" width="1.2" height="2.2" fill="#cdcdcd"/>
<rect x="13.6" y="644.0" width="2.6" height="1.2" fill="#cdcdcd"/>
<path d="M33.0 646.6 V649.8000000000001 H29.8 Z" fill="#cdcdcd"/>
<rect x="2" y="653" width="36" height="1" fill="#484848"/>
<rect x="6" y="656.2" width="28" height="21.8" rx="3" fill="#2d2d2d"/><rect x="15.2" y="661.6" width="10.6" height="10.8" fill="none" stroke="#cdcdcd" stroke-width="1.1"/>
<rect x="17.4" y="664.4" width="4.4" height="3.4" fill="none" stroke="#cdcdcd" stroke-width="1"/><rect x="19.4" y="666.4" width="4.4" height="3.4" fill="#2d2d2d" stroke="#cdcdcd" stroke-width="1"/>
<path d="M33.0 673.6 V676.8000000000001 H29.8 Z" fill="#cdcdcd"/>
<rect x="1664" y="31" width="1" height="1001" fill="#3a3a3a"/>
<rect x="1665" y="31" width="1" height="1001" fill="#484848"/>
<rect x="1666" y="31" width="1" height="1001" fill="#3a3a3a"/>
<rect x="1667" y="31" width="246" height="1001" fill="#535353"/>
<rect x="1667" y="31" width="246" height="11" fill="#424242"/>
<path d="M1905.6 34.2 L1908.6 36.7 L1905.6 39.2 L1906.5 36.7 Z M1909.4 34.2 L1912.4 36.7 L1909.4 39.2 L1910.3 36.7 Z" fill="#cdcdcd" stroke="#cdcdcd" stroke-width="0.5"/>
<rect x="1667" y="42" width="246" height="1" fill="#3b3b3b"/>
<rect x="1667" y="43" width="246" height="26.5" fill="#424242"/>
<rect x="1667" y="43" width="77" height="27" fill="#535353"/>
<rect x="1745" y="43" width="53" height="26.5" fill="#434343"/>
<rect x="1799" y="43" width="80" height="26.5" fill="#434343"/>
<rect x="1744" y="43" width="1" height="26.5" fill="#3b3b3b"/>
<rect x="1798" y="43" width="1" height="26.5" fill="#3b3b3b"/>
<rect x="1879" y="43" width="1" height="26.5" fill="#3b3b3b"/>
<rect x="1744" y="69.5" width="169" height="1" fill="#3b3b3b"/>
<text x="1679.2" y="60.8" font-size="11.3" fill="#f0f0f0" textLength="52.80" lengthAdjust="spacingAndGlyphs" font-weight="bold">Properties</text>
<text x="1756.2" y="60.8" font-size="11.3" fill="#b9b9b9" textLength="30.80" lengthAdjust="spacingAndGlyphs">Pages</text>
<text x="1810" y="60.8" font-size="11.3" fill="#b9b9b9" textLength="61.00" lengthAdjust="spacingAndGlyphs">CC Libraries</text>
<text x="1677" y="91" font-size="10.8" fill="#e2e2e2" textLength="53.20" lengthAdjust="spacingAndGlyphs" stroke="#e2e2e2" stroke-width="0.22">No Selection</text>
<rect x="1667" y="103" width="246" height="1" fill="#4a4a4a"/>
<text x="1677" y="125" font-size="10.8" fill="#e2e2e2" textLength="45.50" lengthAdjust="spacingAndGlyphs" stroke="#e2e2e2" stroke-width="0.22">Document</text>
<rect x="1677.5" y="137.5" width="93" height="20" rx="2" fill="#454545" stroke="#6b6b6b" stroke-width="1"/>
<text x="1681.3" y="151.8" font-size="11" fill="#e2e2e2" textLength="40.20" lengthAdjust="spacingAndGlyphs" stroke="#e2e2e2" stroke-width="0.22">[Custom]</text>
<path d="M1757.4 145.6 L1761 149 L1764.6 145.6" fill="none" stroke="#cdcdcd" stroke-width="1.2"/>
<rect x="1804" y="137" width="22" height="22" rx="2.5" fill="#2c2c2c"/>
<rect x="1808.4" y="140.4" width="13.2" height="15.4" fill="none" stroke="#cdcdcd" stroke-width="1.2"/>
<circle cx="1815" cy="144.6" r="2.1" fill="#cdcdcd"/><path d="M1811 155.8 V150.4 Q1811 147.8 1813.4 147.8 H1816.6 Q1819 147.8 1819 150.4 V155.8 Z" fill="#cdcdcd"/>
<rect x="1833.6" y="141" width="13.4" height="14.6" fill="none" stroke="#bdbdbd" stroke-width="1.1"/>
<circle cx="1837.2" cy="148.4" r="1.9" fill="#bdbdbd"/><path d="M1847 144.6 H1842.4 Q1840.2 144.6 1840.2 146.6 V150.2 Q1840.2 152.2 1842.4 152.2 H1847 Z" fill="#bdbdbd"/>
<text x="1682" y="183" font-size="10.8" fill="#e2e2e2" textLength="12.20" lengthAdjust="spacingAndGlyphs" stroke="#e2e2e2" stroke-width="0.22">W:</text>
<rect x="1697.5" y="170.5" width="73" height="20" rx="2" fill="#454545" stroke="#6b6b6b" stroke-width="1"/>
<line x1="1715.5" y1="171.0" x2="1715.5" y2="190.0" stroke="#6b6b6b" stroke-width="1"/>
<path d="M1703.4 178.3 L1706.7 175.1 L1710.0 178.3 M1703.4 182.9 L1706.7 186.1 L1710.0 182.9" fill="none" stroke="#cdcdcd" stroke-width="1.1"/>
<text x="1720" y="183.6" font-size="11" fill="#e2e2e2" textLength="23.50" lengthAdjust="spacingAndGlyphs" stroke="#e2e2e2" stroke-width="0.22">7.9 in</text>
<text x="1684" y="208.4" font-size="10.8" fill="#e2e2e2" textLength="10.20" lengthAdjust="spacingAndGlyphs" stroke="#e2e2e2" stroke-width="0.22">H:</text>
<rect x="1697.5" y="196.5" width="73" height="20" rx="2" fill="#454545" stroke="#6b6b6b" stroke-width="1"/>
<line x1="1715.5" y1="197.0" x2="1715.5" y2="216.0" stroke="#6b6b6b" stroke-width="1"/>
<path d="M1703.4 204.3 L1706.7 201.1 L1710.0 204.3 M1703.4 208.9 L1706.7 212.1 L1710.0 208.9" fill="none" stroke="#cdcdcd" stroke-width="1.1"/>
<text x="1720" y="209.6" font-size="11" fill="#e2e2e2" textLength="28.20" lengthAdjust="spacingAndGlyphs" stroke="#e2e2e2" stroke-width="0.22">10.9 in</text>
<path d="M1812.4 174.8 L1806.4 177 Q1805 177.6 1805 179 V186.6 H1812.4 Z M1814.2 174.8 L1820.2 177 Q1821.6 177.6 1821.6 179 V186.6 H1814.2 Z" fill="#cdcdcd"/>
<line x1="1813.3" y1="171.6" x2="1813.3" y2="190" stroke="#cdcdcd" stroke-width="1"/>
<rect x="1827.5" y="170.5" width="68" height="20" rx="2" fill="#454545" stroke="#6b6b6b" stroke-width="1"/>
<text x="1832.6" y="183.6" font-size="11" fill="#e2e2e2" textLength="9.40" lengthAdjust="spacingAndGlyphs" stroke="#e2e2e2" stroke-width="0.22">16</text>
<rect x="1804.3" y="201.3" width="11.6" height="11.6" rx="1.8" fill="#d6d6d6"/>
<path d="M1806.6 207 L1809 209.6 L1813.6 203.8" fill="none" stroke="#404040" stroke-width="1.6"/>
<text x="1822" y="211" font-size="10.8" fill="#e2e2e2" textLength="58.50" lengthAdjust="spacingAndGlyphs" stroke="#e2e2e2" stroke-width="0.22">Facing Pages</text>
<text x="1677" y="237" font-size="10.8" fill="#e2e2e2" textLength="35.50" lengthAdjust="spacingAndGlyphs" stroke="#e2e2e2" stroke-width="0.22">Margins</text>
<rect x="1697.5" y="249.5" width="73" height="20" rx="2" fill="#454545" stroke="#6b6b6b" stroke-width="1"/>
<line x1="1715.5" y1="250.0" x2="1715.5" y2="269.0" stroke="#6b6b6b" stroke-width="1"/>
<path d="M1703.4 257.3 L1706.7 254.1 L1710.0 257.3 M1703.4 261.9 L1706.7 265.1 L1710.0 261.9" fill="none" stroke="#cdcdcd" stroke-width="1.1"/>
<text x="1720" y="262.6" font-size="11" fill="#e2e2e2" textLength="33.60" lengthAdjust="spacingAndGlyphs" stroke="#e2e2e2" stroke-width="0.22">0.875 in</text>
<rect x="1697.5" y="275.5" width="73" height="20" rx="2" fill="#454545" stroke="#6b6b6b" stroke-width="1"/>
<line x1="1715.5" y1="276.0" x2="1715.5" y2="295.0" stroke="#6b6b6b" stroke-width="1"/>
<path d="M1703.4 283.3 L1706.7 280.1 L1710.0 283.3 M1703.4 287.9 L1706.7 291.1 L1710.0 287.9" fill="none" stroke="#cdcdcd" stroke-width="1.1"/>
<text x="1720" y="288.8" font-size="11" fill="#e2e2e2" textLength="15.30" lengthAdjust="spacingAndGlyphs" stroke="#e2e2e2" stroke-width="0.22">1 in</text>
<rect x="1823.5" y="249.5" width="73" height="20" rx="2" fill="#454545" stroke="#6b6b6b" stroke-width="1"/>
<line x1="1841.5" y1="250.0" x2="1841.5" y2="269.0" stroke="#6b6b6b" stroke-width="1"/>
<path d="M1829.4 257.3 L1832.7 254.1 L1836.0 257.3 M1829.4 261.9 L1832.7 265.1 L1836.0 261.9" fill="none" stroke="#cdcdcd" stroke-width="1.1"/>
<text x="1846.2" y="262.6" font-size="11" fill="#e2e2e2" textLength="15.30" lengthAdjust="spacingAndGlyphs" stroke="#e2e2e2" stroke-width="0.22">1 in</text>
<rect x="1823.5" y="275.5" width="73" height="20" rx="2" fill="#454545" stroke="#6b6b6b" stroke-width="1"/>
<line x1="1841.5" y1="276.0" x2="1841.5" y2="295.0" stroke="#6b6b6b" stroke-width="1"/>
<path d="M1829.4 283.3 L1832.7 280.1 L1836.0 283.3 M1829.4 287.9 L1832.7 291.1 L1836.0 287.9" fill="none" stroke="#cdcdcd" stroke-width="1.1"/>
<text x="1846.2" y="288.8" font-size="11" fill="#e2e2e2" textLength="33.40" lengthAdjust="spacingAndGlyphs" stroke="#e2e2e2" stroke-width="0.22">0.875 in</text>
<rect x="1677.6" y="251.4" width="16" height="3.8" fill="#cdcdcd"/>
<rect x="1678.2" y="258.6" width="14.8" height="7.6" fill="none" stroke="#cdcdcd" stroke-width="1.2"/>
<rect x="1678.2" y="278" width="14.8" height="7.6" fill="none" stroke="#cdcdcd" stroke-width="1.2"/>
<rect x="1677.6" y="288.6" width="16" height="3.8" fill="#cdcdcd"/>
<rect x="1804.8" y="254.2" width="8.6" height="10.2" fill="none" stroke="#cdcdcd" stroke-width="1.2"/>
<rect x="1816" y="252" width="2.6" height="14.6" fill="#cdcdcd"/>
<line x1="1819.6" y1="250.8" x2="1819.6" y2="267.6" stroke="#cdcdcd" stroke-width="1"/>
<rect x="1804.4" y="278" width="2.8" height="14.6" fill="#cdcdcd"/>
<path d="M1820 279.6 H1810.4 V291 H1820" fill="none" stroke="#cdcdcd" stroke-width="1.2"/>
<line x1="1819.6" y1="277" x2="1819.6" y2="293.6" stroke="#cdcdcd" stroke-width="1"/>
<g transform="translate(1786.6,271) rotate(-12)"><rect x="-2.7" y="-6.4" width="5.4" height="12.8" rx="2.7" fill="none" stroke="#cdcdcd" stroke-width="1.5"/></g>
<line x1="1780.6" y1="265.2" x2="1792.8" y2="277.4" stroke="#535353" stroke-width="3.4"/>
<line x1="1780.8" y1="265.4" x2="1792.6" y2="277.2" stroke="#cdcdcd" stroke-width="1.3"/>
<rect x="1677.5" y="311.5" width="219" height="19" rx="2" fill="none" stroke="#737373" stroke-width="1"/>
<text x="1755" y="325" font-size="11.3" fill="#e2e2e2" textLength="61.80" lengthAdjust="spacingAndGlyphs" stroke="#e2e2e2" stroke-width="0.22">Adjust Layout</text>
<rect x="1667" y="337" width="246" height="1" fill="#4a4a4a"/>
<text x="1677" y="358.8" font-size="10.8" fill="#e2e2e2" textLength="22.30" lengthAdjust="spacingAndGlyphs" stroke="#e2e2e2" stroke-width="0.22">Page</text>
<rect x="1677.5" y="370.5" width="93" height="20" rx="2" fill="#454545" stroke="#6b6b6b" stroke-width="1"/>
<line x1="1752.5" y1="371" x2="1752.5" y2="390" stroke="#6b6b6b" stroke-width="1"/>
<path d="M1757.4 378.6 L1761 382 L1764.6 378.6" fill="none" stroke="#cdcdcd" stroke-width="1.2"/>
<text x="1681.5" y="383.8" font-size="11" fill="#e2e2e2" textLength="9.60" lengthAdjust="spacingAndGlyphs" stroke="#e2e2e2" stroke-width="0.22">11</text>
<rect x="1850.5" y="377.5" width="10" height="10" fill="none" stroke="#cdcdcd" stroke-width="1.1"/><path d="M1855.5 380 V385 M1853 382.5 H1858" stroke="#cdcdcd" stroke-width="1.1"/>
<path d="M1878.6 379.4 H1886.6 V386 Q1886.6 387.6 1885 387.6 H1880.2 Q1878.6 387.6 1878.6 386 Z" fill="none" stroke="#cdcdcd" stroke-width="1.1"/><path d="M1877.2 378.2 H1888 M1880.8 378 V376.6 H1884.4 V378 M1881 381 V385.8 M1882.6 381 V385.8 M1884.2 381 V385.8" fill="none" stroke="#cdcdcd" stroke-width="1"/>
<rect x="1677.5" y="399.5" width="219" height="20" rx="2" fill="none" stroke="#737373" stroke-width="1"/>
<text x="1765" y="413.8" font-size="11.3" fill="#e2e2e2" textLength="42.50" lengthAdjust="spacingAndGlyphs" stroke="#e2e2e2" stroke-width="0.22">Edit Page</text>
<rect x="1667" y="426" width="246" height="1" fill="#4a4a4a"/>
<text x="1677" y="452" font-size="10.8" fill="#e2e2e2" textLength="64.80" lengthAdjust="spacingAndGlyphs" stroke="#e2e2e2" stroke-width="0.22">Rulers &amp; Grids</text>
<rect x="1798" y="437" width="22" height="22" rx="2.5" fill="#2c2c2c"/>
<path d="M1800.8 440 H1816.6 V443.6 H1804.4 V456 H1800.8 Z" fill="#cdcdcd"/>
<rect x="1806.2" y="441.2" width="1.2" height="1.4" fill="#2c2c2c"/>
<rect x="1801.8" y="446.0" width="1.4" height="1.2" fill="#2c2c2c"/>
<rect x="1809.0" y="441.2" width="1.2" height="1.4" fill="#2c2c2c"/>
<rect x="1801.8" y="448.8" width="1.4" height="1.2" fill="#2c2c2c"/>
<rect x="1811.8" y="441.2" width="1.2" height="1.4" fill="#2c2c2c"/>
<rect x="1801.8" y="451.6" width="1.4" height="1.2" fill="#2c2c2c"/>
<rect x="1814.6000000000001" y="441.2" width="1.2" height="1.4" fill="#2c2c2c"/>
<rect x="1801.8" y="454.4" width="1.4" height="1.2" fill="#2c2c2c"/>
<rect x="1839.4" y="440.6" width="15" height="15" fill="none" stroke="#cdcdcd" stroke-width="1.1"/>
<line x1="1841" y1="443.4" x2="1853" y2="443.4" stroke="#cdcdcd" stroke-width="1"/>
<line x1="1841" y1="446.59999999999997" x2="1853" y2="446.59999999999997" stroke="#cdcdcd" stroke-width="1"/>
<line x1="1841" y1="449.79999999999995" x2="1853" y2="449.79999999999995" stroke="#cdcdcd" stroke-width="1"/>
<line x1="1841" y1="453.0" x2="1853" y2="453.0" stroke="#cdcdcd" stroke-width="1"/>
<line x1="1842.2" y1="441" x2="1842.2" y2="455.4" stroke="#cdcdcd" stroke-width="0.9"/>
<line x1="1851.8" y1="441" x2="1851.8" y2="455.4" stroke="#cdcdcd" stroke-width="0.9"/>
<rect x="1877.4" y="440.6" width="15" height="15" fill="none" stroke="#cdcdcd" stroke-width="1.1"/>
<line x1="1882.4" y1="440.6" x2="1882.4" y2="455.6" stroke="#cdcdcd" stroke-width="1"/>
<line x1="1877.4" y1="445.6" x2="1892.4" y2="445.6" stroke="#cdcdcd" stroke-width="1"/>
<line x1="1887.4" y1="440.6" x2="1887.4" y2="455.6" stroke="#cdcdcd" stroke-width="1"/>
<line x1="1877.4" y1="450.6" x2="1892.4" y2="450.6" stroke="#cdcdcd" stroke-width="1"/>
<rect x="1667" y="466" width="246" height="1" fill="#4a4a4a"/>
<text x="1677" y="492" font-size="10.8" fill="#e2e2e2" textLength="30.80" lengthAdjust="spacingAndGlyphs" stroke="#e2e2e2" stroke-width="0.22">Guides</text>
<rect x="1798" y="477" width="22" height="22" rx="2.5" fill="#2c2c2c"/>
<rect x="1836" y="477" width="22" height="22" rx="2.5" fill="#2c2c2c"/>
<rect x="1874" y="477" width="22" height="22" rx="2.5" fill="#2c2c2c"/>
<path d="M1805 480 V496 M1808.4 480 V496 M1800.6 485 H1817.4 M1800.6 491.4 H1817.4" stroke="#cdcdcd" stroke-width="1" fill="none"/>
<path d="M1843 480 V496 M1846.4 480 V496 M1838.6 485 H1855.4 M1838.6 491.4 H1848" stroke="#cdcdcd" stroke-width="1" fill="none"/>
<rect x="1849.4" y="490.6" width="6.8" height="5.6" fill="#cdcdcd"/>
<path d="M1850.6 490.6 V488.6 A2.1 2.1 0 0 1 1854.8 488.6" fill="none" stroke="#cdcdcd" stroke-width="1.1"/>
<path d="M1880.8 480 V496 M1876.6 485 H1885 M1882.4 487.4 L1892.8 487.4 M1882.4 487.4 L1885.6 484.6 M1882.4 487.4 L1885.6 490.2 M1876.8 481 L1884.4 488.8" stroke="#cdcdcd" stroke-width="1" fill="none"/>
<path d="M1891.8 489.2 L1888 493.4 H1890.4 L1889 497 L1893.6 492.2 H1891 Z" fill="#cdcdcd"/>
<rect x="1667" y="506" width="246" height="1" fill="#4a4a4a"/>
<text x="1677" y="523" font-size="10.8" fill="#e2e2e2" textLength="59.80" lengthAdjust="spacingAndGlyphs" stroke="#e2e2e2" stroke-width="0.22">Quick Actions</text>
<rect x="1677.5" y="534.5" width="219" height="20.5" rx="2" fill="none" stroke="#737373" stroke-width="1"/>
<text x="1763" y="548.8" font-size="11.3" fill="#e2e2e2" textLength="47.30" lengthAdjust="spacingAndGlyphs" stroke="#e2e2e2" stroke-width="0.22">Import File</text>
</svg>
</body></html>
